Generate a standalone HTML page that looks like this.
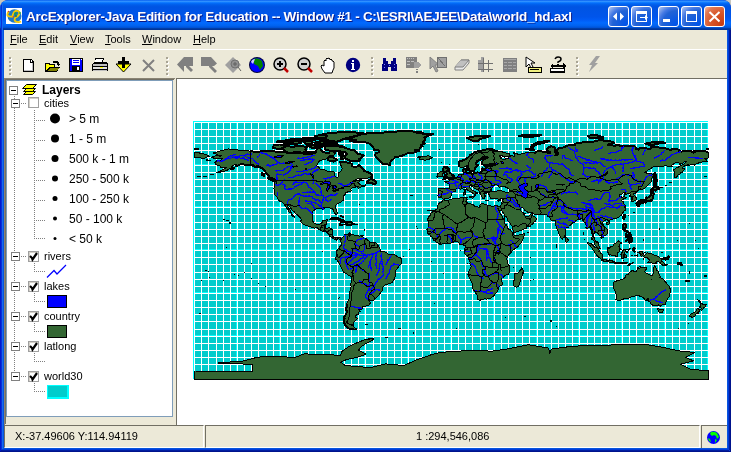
<!DOCTYPE html>
<html><head><meta charset="utf-8">
<style>
*{margin:0;padding:0;box-sizing:border-box}
html,body{width:731px;height:452px;overflow:hidden;background:#c8c6bd;font-family:"Liberation Sans",sans-serif}
.a{position:absolute}
#win{position:absolute;left:0;top:0;width:731px;height:452px;background:#0842d8;border-radius:8px 8px 0 0;overflow:hidden}
#title{position:absolute;left:0;top:0;width:731px;height:30px;
background:linear-gradient(to bottom,#0058ee 0%,#3593ff 4%,#288eff 6%,#127dff 8%,#036ffc 10%,#0262ee 14%,#0057e5 20%,#0054e3 24%,#0055eb 56%,#005bf5 66%,#026afe 76%,#0062ef 86%,#0052d6 92%,#0040ab 94%,#003092 100%);border-radius:8px 8px 0 0}
#ttext{will-change:transform;position:absolute;left:26px;top:9px;font-weight:bold;font-size:13.5px;color:#fff;text-shadow:1px 1px #0a1883;white-space:nowrap;letter-spacing:-0.26px}
.tb{position:absolute;top:6px;width:21px;height:21px;border:1px solid #fff;border-radius:3px;
background:radial-gradient(circle at 90% 90%,#0054e9 0%,#2263d5 55%,#4479e4 70%,#a3bbec 95%,#fff 100%)}
#frame{position:absolute;left:4px;top:30px;width:723px;height:418px;background:#ece9d8}
.m{position:absolute;top:2px;font-size:11px;line-height:14px;will-change:transform}
.g{will-change:transform}
</style></head><body>
<div id="win">
 <div id="title">
  <svg class="a" style="left:6px;top:8px" width="16" height="16" viewBox="6 8 16 16">
   <rect x="6" y="8" width="16" height="16" fill="#fff"/>
   <ellipse cx="14.5" cy="16" rx="7" ry="6.8" fill="#1e78c8"/>
   <path d="M9 11.5Q7 13 7.5 15.5Q9 17 12.5 16.5Q13 12 15.5 11Q19 10.5 19.5 13Q19 16 15.5 17.5Q14 19 15 21Q18 23 21 21.5" stroke="#f5c800" stroke-width="1.8" fill="none"/>
   <circle cx="15.5" cy="13.5" r="1.2" fill="#20a040"/><circle cx="16" cy="16" r="1" fill="#208040"/><circle cx="20" cy="13" r="1" fill="#30b050"/>
   <circle cx="8.5" cy="11.5" r="0.8" fill="#e04020"/><circle cx="13.2" cy="16.8" r="0.7" fill="#e04020"/>
  </svg>
  <div id="ttext">ArcExplorer-Java Edition for Education -- Window #1 - C:\ESRI\AEJEE\Data\world_hd.axl</div>
  <div class="tb" style="left:608px"></div>
  <div class="tb" style="left:631px"></div>
  <div class="tb" style="left:658px"></div>
  <div class="tb" style="left:681px"></div>
  <div class="tb" style="left:704px;background:radial-gradient(circle at 90% 90%,#c83c10 0%,#d8572a 50%,#e27a55 80%,#f4c0a8 100%)"></div>
  <svg class="a" style="left:600px;top:0" width="131" height="30" viewBox="600 0 131 30" shape-rendering="crispEdges">
   <path d="M617 12.5V20.5L613 16.5Z M620 12.5V20.5L624 16.5Z" fill="#fff" shape-rendering="auto"/>
   <path d="M636 11H647V22H636Z M637 14V21H646V14Z" fill="#fff" fill-rule="evenodd"/>
   <rect x="640" y="17" width="6" height="1" fill="#fff"/>
   <path d="M645 15L648 17.5L645 20Z" fill="#fff" shape-rendering="auto"/>
   <rect x="663" y="19" width="7" height="3" fill="#fff"/>
   <path d="M686 11H697V22H686Z M687 14V21H696V14Z" fill="#fff" fill-rule="evenodd"/>
   <path d="M709.5 12L719.5 21.5M719.5 12L709.5 21.5" stroke="#fff" stroke-width="2" shape-rendering="auto"/>
  </svg>
 </div>
 <div id="frame"></div>
 <div class="a" style="left:0;top:30px;width:1px;height:422px;background:#0019cf"></div>
 <div class="a" style="left:1px;top:5px;width:1px;height:447px;background:#0831d9"></div>
 <div class="a" style="left:2px;top:4px;width:1px;height:448px;background:#166aee"></div>
 <div class="a" style="left:3px;top:30px;width:1px;height:422px;background:#0855dd"></div>
 <div class="a" style="left:727px;top:30px;width:1px;height:418px;background:#0855dd"></div>
 <div class="a" style="left:728px;top:30px;width:1px;height:419px;background:#003bda"></div>
 <div class="a" style="left:729px;top:30px;width:1px;height:420px;background:#001ea0"></div>
 <div class="a" style="left:730px;top:30px;width:1px;height:422px;background:#00138c"></div>
 <div class="a" style="left:3px;top:448px;width:724px;height:1px;background:#0855dd"></div>
 <div class="a" style="left:2px;top:449px;width:726px;height:1px;background:#003bda"></div>
 <div class="a" style="left:1px;top:450px;width:728px;height:1px;background:#001ea0"></div>
 <div class="a" style="left:0;top:451px;width:730px;height:1px;background:#00138c"></div>
 <div class="a" style="left:4px;top:49px;width:723px;height:1px;background:#fff"></div>
 <div class="a" style="left:0;top:30px;width:731px;height:19px;color:#000">
  <span class="m" style="left:10px"><u>F</u>ile</span>
  <span class="m" style="left:39px"><u>E</u>dit</span>
  <span class="m" style="left:70px"><u>V</u>iew</span>
  <span class="m" style="left:105px"><u>T</u>ools</span>
  <span class="m" style="left:142px"><u>W</u>indow</span>
  <span class="m" style="left:193px"><u>H</u>elp</span>
 </div>
 <svg class="a" style="left:0;top:0" width="731" height="80" viewBox="0 0 731 80" shape-rendering="crispEdges">
<!-- grippers --><rect x="10" y="58" width="2" height="2" fill="#fff"/><rect x="9" y="57" width="2" height="2" fill="#a8a494"/><rect x="10" y="62" width="2" height="2" fill="#fff"/><rect x="9" y="61" width="2" height="2" fill="#a8a494"/><rect x="10" y="66" width="2" height="2" fill="#fff"/><rect x="9" y="65" width="2" height="2" fill="#a8a494"/><rect x="10" y="70" width="2" height="2" fill="#fff"/><rect x="9" y="69" width="2" height="2" fill="#a8a494"/><rect x="10" y="74" width="2" height="2" fill="#fff"/><rect x="9" y="73" width="2" height="2" fill="#a8a494"/><rect x="167" y="58" width="2" height="2" fill="#fff"/><rect x="166" y="57" width="2" height="2" fill="#a8a494"/><rect x="167" y="62" width="2" height="2" fill="#fff"/><rect x="166" y="61" width="2" height="2" fill="#a8a494"/><rect x="167" y="66" width="2" height="2" fill="#fff"/><rect x="166" y="65" width="2" height="2" fill="#a8a494"/><rect x="167" y="70" width="2" height="2" fill="#fff"/><rect x="166" y="69" width="2" height="2" fill="#a8a494"/><rect x="167" y="74" width="2" height="2" fill="#fff"/><rect x="166" y="73" width="2" height="2" fill="#a8a494"/><rect x="372" y="58" width="2" height="2" fill="#fff"/><rect x="371" y="57" width="2" height="2" fill="#a8a494"/><rect x="372" y="62" width="2" height="2" fill="#fff"/><rect x="371" y="61" width="2" height="2" fill="#a8a494"/><rect x="372" y="66" width="2" height="2" fill="#fff"/><rect x="371" y="65" width="2" height="2" fill="#a8a494"/><rect x="372" y="70" width="2" height="2" fill="#fff"/><rect x="371" y="69" width="2" height="2" fill="#a8a494"/><rect x="372" y="74" width="2" height="2" fill="#fff"/><rect x="371" y="73" width="2" height="2" fill="#a8a494"/><rect x="577" y="58" width="2" height="2" fill="#fff"/><rect x="576" y="57" width="2" height="2" fill="#a8a494"/><rect x="577" y="62" width="2" height="2" fill="#fff"/><rect x="576" y="61" width="2" height="2" fill="#a8a494"/><rect x="577" y="66" width="2" height="2" fill="#fff"/><rect x="576" y="65" width="2" height="2" fill="#a8a494"/><rect x="577" y="70" width="2" height="2" fill="#fff"/><rect x="576" y="69" width="2" height="2" fill="#a8a494"/><rect x="577" y="74" width="2" height="2" fill="#fff"/><rect x="576" y="73" width="2" height="2" fill="#a8a494"/>
<!-- new doc -->
<path d="M23 59H31L34 62V72H23Z" fill="#000"/>
<path d="M24 60H30V63H33V71H24Z" fill="#fff"/>
<path d="M32 63H33V71H24V70H32Z" fill="#c0c0c0"/>
<rect x="31" y="60" width="1" height="2" fill="#fff"/>
<!-- open folder -->
<path d="M45 63H49L50 64H55V67H60L57 72H45Z" fill="#000"/>
<path d="M46 64H48L49 65H54V67H49L46 71Z" fill="#ffff00"/>
<path d="M47 71L50 68H59L56 71Z" fill="#808000"/>
<path d="M53 61H57L59 62V64H60L58 66L56 64H57V63H53Z" fill="#000"/>
<!-- save -->
<rect x="69" y="58" width="14" height="14" fill="#000"/>
<rect x="70" y="59" width="12" height="12" fill="#0000ff"/>
<rect x="72" y="59" width="8" height="6" fill="#fff"/>
<rect x="73" y="60" width="6" height="1" fill="#0000ff"/><rect x="73" y="62" width="6" height="1" fill="#0000ff"/>
<rect x="72" y="66" width="8" height="5" fill="#000"/>
<rect x="77" y="67" width="2" height="3" fill="#fff"/>
<rect x="81" y="59" width="1" height="1" fill="#fff"/>
<!-- printer -->
<path d="M95 58H104L103 62H106L108 64V71H92V64L94 62H95Z" fill="#000"/>
<path d="M96 59H103L102 62H95Z" fill="#fff"/>
<rect x="93" y="64" width="14" height="2" fill="#c0c0c0"/>
<rect x="93" y="67" width="14" height="2" fill="#e0e0e0"/>
<rect x="100" y="67" width="3" height="1" fill="#ffff00"/>
<rect x="93" y="70" width="14" height="1" fill="#c0c0c0"/>
<!-- add -->
<path d="M116 64H131L123.5 72Z" fill="#ffff00" stroke="#000" stroke-width="1" shape-rendering="auto"/>
<rect x="122" y="57" width="3" height="11" fill="#000"/>
<rect x="118" y="61" width="11" height="3" fill="#000"/>
<!-- X gray -->
<path d="M143 60L154 71M154 60L143 71" stroke="#808080" stroke-width="2" shape-rendering="auto"/>
<!-- back arrow -->
<path d="M177 64.5L184 57H193V66H189L193 70L191 72L186 67V66H184V72Z" fill="#808080" shape-rendering="auto"/>
<path d="M201 66L201 57H211L217 63.5L214 66H212L217 71L215 73L209 67V66Z" fill="#808080" shape-rendering="auto"/>
<path d="M225 65L233 57L241 65L233 73Z" fill="#a0a0a0" shape-rendering="auto"/>
<circle cx="235" cy="64" r="4" fill="#909090" stroke="#707070" shape-rendering="auto"/>
<path d="M233 64H237M235 62V66M238 67L241 71" stroke="#606060" stroke-width="1" shape-rendering="auto"/>
<!-- globe -->
<circle cx="257" cy="65" r="8" fill="#000040" shape-rendering="auto"/>
<circle cx="257" cy="65" r="7" fill="#0000ff" shape-rendering="auto"/>
<path d="M254 59Q258 57 262 61L263 66L260 70L258 66L254 64Z" fill="#008000" shape-rendering="auto"/>
<path d="M251 62Q252 59 255 59L253 64Z" fill="#ffffff" opacity="0.8" shape-rendering="auto"/>
<!-- zoom in -->
<circle cx="280" cy="64" r="6" fill="#d0d0d0" stroke="#000" stroke-width="1.5" shape-rendering="auto"/>
<path d="M277 64H283M280 61V67" stroke="#000" stroke-width="2" shape-rendering="auto"/>
<path d="M284 68L288 72" stroke="#c00000" stroke-width="2.5" shape-rendering="auto"/>
<circle cx="304" cy="64" r="6" fill="#d0d0d0" stroke="#000" stroke-width="1.5" shape-rendering="auto"/>
<path d="M301 64H307" stroke="#000" stroke-width="2" shape-rendering="auto"/>
<path d="M308 68L312 72" stroke="#c00000" stroke-width="2.5" shape-rendering="auto"/>
<!-- hand -->
<path d="M325 73L322 69L321 66L322 65L324 66V61L325 60L326 61V59L327 58L328 59V58.5L329 58L330 59V60L331 59L332 60V61L333 61L334 62V68L333 70L332 73Z" fill="#fff" stroke="#000" stroke-width="1" shape-rendering="auto"/>
<!-- info -->
<circle cx="353" cy="65" r="7.2" fill="#000080" shape-rendering="auto"/>
<rect x="352" y="60" width="2" height="2" fill="#fff"/>
<path d="M351 63H354V69H355V70H351V69H352V64H351Z" fill="#fff"/>
<!-- binoculars -->
<path d="M383 58H386V61H388V64H391V61H393V58H396V63L397 65V71H391V67H388V71H382V65L383 63Z" fill="#000080"/>
<g fill="#8080ff"><rect x="384" y="64" width="1" height="1"/><rect x="384" y="67" width="1" height="1"/><rect x="394" y="64" width="1" height="1"/><rect x="394" y="67" width="1" height="1"/><rect x="389" y="65" width="1" height="1"/></g>
<!-- table with arrow gray -->
<rect x="406" y="57" width="11" height="11" fill="#808080"/>
<g fill="#c0c0c0"><rect x="407" y="58" width="1" height="1"/><rect x="409" y="58" width="1" height="1"/><rect x="411" y="58" width="1" height="1"/><rect x="413" y="58" width="1" height="1"/><rect x="407" y="61" width="3" height="1"/><rect x="411" y="61" width="3" height="1"/><rect x="407" y="64" width="3" height="1"/></g>
<path d="M414 62H418L421 65L418 68H414Z" fill="#a0a0a0"/>
<rect x="416" y="69" width="2" height="1" fill="#808080"/><rect x="416" y="71" width="2" height="2" fill="#808080"/>
<!-- select pointer gray -->
<path d="M430 57L430 69L433 66L436 72L438 71L435 65H439Z" fill="#a0a0a0" stroke="#808080" shape-rendering="auto"/>
<rect x="437" y="57" width="9" height="10" fill="#a0a0a0" stroke="#707070"/>
<path d="M438 58L445 66" stroke="#707070"/>
<!-- eraser -->
<path d="M455 67L461 60H469V63L463 70H455Z" fill="#e8e8e8" stroke="#808080" shape-rendering="auto"/>
<path d="M461 60L469 60L463 67H455" fill="#c0c0c0" stroke="#808080" shape-rendering="auto"/>
<!-- graph gray -->
<path d="M481 57H484V72H481Z" fill="#a0a0a0"/>
<path d="M478 60H481V70H478Z" fill="#a0a0a0"/>
<path d="M478 63H493M478 69H493M483 58V72M488 60V72" stroke="#707070"/>
<!-- table gray -->
<rect x="503" y="58" width="14" height="14" fill="#808080"/>
<g fill="#a8a8a8"><rect x="504" y="62" width="3" height="1"/><rect x="508" y="62" width="4" height="1"/><rect x="513" y="62" width="3" height="1"/><rect x="504" y="65" width="3" height="1"/><rect x="508" y="65" width="4" height="1"/><rect x="513" y="65" width="3" height="1"/><rect x="504" y="68" width="3" height="1"/><rect x="508" y="68" width="4" height="1"/><rect x="513" y="68" width="3" height="1"/><rect x="504" y="59" width="12" height="1"/></g>
<!-- pointer + yellow ruler -->
<path d="M526 57V67L529 64L531 68L533 67L531 63H535Z" fill="#fff" stroke="#000" shape-rendering="auto"/>
<rect x="528" y="67" width="14" height="6" fill="#000"/>
<rect x="529" y="68" width="12" height="4" fill="#f0f080"/>
<path d="M530 69L531 70L532 69L533 70L534 69L535 70L536 69L537 70L538 69L539 70" stroke="#000" fill="none"/>
<!-- measure ? -->
<path d="M555 59Q556 57 558 57Q561 57 561 59Q561 61 558 62V63" stroke="#000" stroke-width="1.5" fill="none" shape-rendering="auto"/>
<rect x="557" y="64" width="2" height="2" fill="#000"/>
<path d="M550 66L553 63V65H563V63L566 66L563 69V67H553V69Z" fill="#000"/>
<rect x="550" y="68" width="15" height="5" fill="#000"/>
<rect x="551" y="69" width="13" height="2" fill="#fff"/>
<!-- lightning -->
<path d="M596 56H600L595 63H598L589 72L592 65H589Z" fill="#a0a0a0" shape-rendering="auto"/>
</svg>

 <div class="a" style="left:4px;top:78px;width:171px;height:347px;border-top:1px solid #8a8474;border-left:1px solid #8a8474;"></div>
 <div class="a" style="left:5px;top:79px;width:169px;height:345px;border-top:1px solid #716f64;border-left:1px solid #716f64;"></div>
 <div class="a" style="left:6px;top:80px;width:167px;height:337px;background:#fff;border:1px solid #7f9db9"></div>
 <svg class="a" style="left:0;top:0;will-change:transform" width="180" height="420" viewBox="0 0 180 420" shape-rendering="crispEdges"><g fill="#808080"><rect x="14" y="96" width="1" height="1"/><rect x="14" y="98" width="1" height="1"/><rect x="14" y="108" width="1" height="1"/><rect x="14" y="110" width="1" height="1"/><rect x="14" y="112" width="1" height="1"/><rect x="14" y="114" width="1" height="1"/><rect x="14" y="116" width="1" height="1"/><rect x="14" y="118" width="1" height="1"/><rect x="14" y="120" width="1" height="1"/><rect x="14" y="122" width="1" height="1"/><rect x="14" y="124" width="1" height="1"/><rect x="14" y="126" width="1" height="1"/><rect x="14" y="128" width="1" height="1"/><rect x="14" y="130" width="1" height="1"/><rect x="14" y="132" width="1" height="1"/><rect x="14" y="134" width="1" height="1"/><rect x="14" y="136" width="1" height="1"/><rect x="14" y="138" width="1" height="1"/><rect x="14" y="140" width="1" height="1"/><rect x="14" y="142" width="1" height="1"/><rect x="14" y="144" width="1" height="1"/><rect x="14" y="146" width="1" height="1"/><rect x="14" y="148" width="1" height="1"/><rect x="14" y="150" width="1" height="1"/><rect x="14" y="152" width="1" height="1"/><rect x="14" y="154" width="1" height="1"/><rect x="14" y="156" width="1" height="1"/><rect x="14" y="158" width="1" height="1"/><rect x="14" y="160" width="1" height="1"/><rect x="14" y="162" width="1" height="1"/><rect x="14" y="164" width="1" height="1"/><rect x="14" y="166" width="1" height="1"/><rect x="14" y="168" width="1" height="1"/><rect x="14" y="170" width="1" height="1"/><rect x="14" y="172" width="1" height="1"/><rect x="14" y="174" width="1" height="1"/><rect x="14" y="176" width="1" height="1"/><rect x="14" y="178" width="1" height="1"/><rect x="14" y="180" width="1" height="1"/><rect x="14" y="182" width="1" height="1"/><rect x="14" y="184" width="1" height="1"/><rect x="14" y="186" width="1" height="1"/><rect x="14" y="188" width="1" height="1"/><rect x="14" y="190" width="1" height="1"/><rect x="14" y="192" width="1" height="1"/><rect x="14" y="194" width="1" height="1"/><rect x="14" y="196" width="1" height="1"/><rect x="14" y="198" width="1" height="1"/><rect x="14" y="200" width="1" height="1"/><rect x="14" y="202" width="1" height="1"/><rect x="14" y="204" width="1" height="1"/><rect x="14" y="206" width="1" height="1"/><rect x="14" y="208" width="1" height="1"/><rect x="14" y="210" width="1" height="1"/><rect x="14" y="212" width="1" height="1"/><rect x="14" y="214" width="1" height="1"/><rect x="14" y="216" width="1" height="1"/><rect x="14" y="218" width="1" height="1"/><rect x="14" y="220" width="1" height="1"/><rect x="14" y="222" width="1" height="1"/><rect x="14" y="224" width="1" height="1"/><rect x="14" y="226" width="1" height="1"/><rect x="14" y="228" width="1" height="1"/><rect x="14" y="230" width="1" height="1"/><rect x="14" y="232" width="1" height="1"/><rect x="14" y="234" width="1" height="1"/><rect x="14" y="236" width="1" height="1"/><rect x="14" y="238" width="1" height="1"/><rect x="14" y="240" width="1" height="1"/><rect x="14" y="242" width="1" height="1"/><rect x="14" y="244" width="1" height="1"/><rect x="14" y="246" width="1" height="1"/><rect x="14" y="248" width="1" height="1"/><rect x="14" y="250" width="1" height="1"/><rect x="14" y="262" width="1" height="1"/><rect x="14" y="264" width="1" height="1"/><rect x="14" y="266" width="1" height="1"/><rect x="14" y="268" width="1" height="1"/><rect x="14" y="270" width="1" height="1"/><rect x="14" y="272" width="1" height="1"/><rect x="14" y="274" width="1" height="1"/><rect x="14" y="276" width="1" height="1"/><rect x="14" y="278" width="1" height="1"/><rect x="14" y="280" width="1" height="1"/><rect x="14" y="292" width="1" height="1"/><rect x="14" y="294" width="1" height="1"/><rect x="14" y="296" width="1" height="1"/><rect x="14" y="298" width="1" height="1"/><rect x="14" y="300" width="1" height="1"/><rect x="14" y="302" width="1" height="1"/><rect x="14" y="304" width="1" height="1"/><rect x="14" y="306" width="1" height="1"/><rect x="14" y="308" width="1" height="1"/><rect x="14" y="310" width="1" height="1"/><rect x="14" y="322" width="1" height="1"/><rect x="14" y="324" width="1" height="1"/><rect x="14" y="326" width="1" height="1"/><rect x="14" y="328" width="1" height="1"/><rect x="14" y="330" width="1" height="1"/><rect x="14" y="332" width="1" height="1"/><rect x="14" y="334" width="1" height="1"/><rect x="14" y="336" width="1" height="1"/><rect x="14" y="338" width="1" height="1"/><rect x="14" y="340" width="1" height="1"/><rect x="14" y="352" width="1" height="1"/><rect x="14" y="354" width="1" height="1"/><rect x="14" y="356" width="1" height="1"/><rect x="14" y="358" width="1" height="1"/><rect x="14" y="360" width="1" height="1"/><rect x="14" y="362" width="1" height="1"/><rect x="14" y="364" width="1" height="1"/><rect x="14" y="366" width="1" height="1"/><rect x="14" y="368" width="1" height="1"/><rect x="14" y="370" width="1" height="1"/><rect x="34" y="110" width="1" height="1"/><rect x="34" y="112" width="1" height="1"/><rect x="34" y="114" width="1" height="1"/><rect x="34" y="116" width="1" height="1"/><rect x="34" y="118" width="1" height="1"/><rect x="34" y="120" width="1" height="1"/><rect x="34" y="122" width="1" height="1"/><rect x="34" y="124" width="1" height="1"/><rect x="34" y="126" width="1" height="1"/><rect x="34" y="128" width="1" height="1"/><rect x="34" y="130" width="1" height="1"/><rect x="34" y="132" width="1" height="1"/><rect x="34" y="134" width="1" height="1"/><rect x="34" y="136" width="1" height="1"/><rect x="34" y="138" width="1" height="1"/><rect x="34" y="140" width="1" height="1"/><rect x="34" y="142" width="1" height="1"/><rect x="34" y="144" width="1" height="1"/><rect x="34" y="146" width="1" height="1"/><rect x="34" y="148" width="1" height="1"/><rect x="34" y="150" width="1" height="1"/><rect x="34" y="152" width="1" height="1"/><rect x="34" y="154" width="1" height="1"/><rect x="34" y="156" width="1" height="1"/><rect x="34" y="158" width="1" height="1"/><rect x="34" y="160" width="1" height="1"/><rect x="34" y="162" width="1" height="1"/><rect x="34" y="164" width="1" height="1"/><rect x="34" y="166" width="1" height="1"/><rect x="34" y="168" width="1" height="1"/><rect x="34" y="170" width="1" height="1"/><rect x="34" y="172" width="1" height="1"/><rect x="34" y="174" width="1" height="1"/><rect x="34" y="176" width="1" height="1"/><rect x="34" y="178" width="1" height="1"/><rect x="34" y="180" width="1" height="1"/><rect x="34" y="182" width="1" height="1"/><rect x="34" y="184" width="1" height="1"/><rect x="34" y="186" width="1" height="1"/><rect x="34" y="188" width="1" height="1"/><rect x="34" y="190" width="1" height="1"/><rect x="34" y="192" width="1" height="1"/><rect x="34" y="194" width="1" height="1"/><rect x="34" y="196" width="1" height="1"/><rect x="34" y="198" width="1" height="1"/><rect x="34" y="200" width="1" height="1"/><rect x="34" y="202" width="1" height="1"/><rect x="34" y="204" width="1" height="1"/><rect x="34" y="206" width="1" height="1"/><rect x="34" y="208" width="1" height="1"/><rect x="34" y="210" width="1" height="1"/><rect x="34" y="212" width="1" height="1"/><rect x="34" y="214" width="1" height="1"/><rect x="34" y="216" width="1" height="1"/><rect x="34" y="218" width="1" height="1"/><rect x="34" y="220" width="1" height="1"/><rect x="34" y="222" width="1" height="1"/><rect x="34" y="224" width="1" height="1"/><rect x="34" y="226" width="1" height="1"/><rect x="34" y="228" width="1" height="1"/><rect x="34" y="230" width="1" height="1"/><rect x="34" y="232" width="1" height="1"/><rect x="34" y="234" width="1" height="1"/><rect x="34" y="236" width="1" height="1"/><rect x="34" y="238" width="1" height="1"/><rect x="36" y="120" width="1" height="1"/><rect x="38" y="120" width="1" height="1"/><rect x="40" y="120" width="1" height="1"/><rect x="42" y="120" width="1" height="1"/><rect x="44" y="120" width="1" height="1"/><rect x="36" y="140" width="1" height="1"/><rect x="38" y="140" width="1" height="1"/><rect x="40" y="140" width="1" height="1"/><rect x="42" y="140" width="1" height="1"/><rect x="44" y="140" width="1" height="1"/><rect x="36" y="160" width="1" height="1"/><rect x="38" y="160" width="1" height="1"/><rect x="40" y="160" width="1" height="1"/><rect x="42" y="160" width="1" height="1"/><rect x="44" y="160" width="1" height="1"/><rect x="36" y="180" width="1" height="1"/><rect x="38" y="180" width="1" height="1"/><rect x="40" y="180" width="1" height="1"/><rect x="42" y="180" width="1" height="1"/><rect x="44" y="180" width="1" height="1"/><rect x="36" y="200" width="1" height="1"/><rect x="38" y="200" width="1" height="1"/><rect x="40" y="200" width="1" height="1"/><rect x="42" y="200" width="1" height="1"/><rect x="44" y="200" width="1" height="1"/><rect x="36" y="220" width="1" height="1"/><rect x="38" y="220" width="1" height="1"/><rect x="40" y="220" width="1" height="1"/><rect x="42" y="220" width="1" height="1"/><rect x="44" y="220" width="1" height="1"/><rect x="36" y="238" width="1" height="1"/><rect x="38" y="238" width="1" height="1"/><rect x="40" y="238" width="1" height="1"/><rect x="42" y="238" width="1" height="1"/><rect x="44" y="238" width="1" height="1"/><rect x="21" y="256" width="1" height="1"/><rect x="23" y="256" width="1" height="1"/><rect x="25" y="256" width="1" height="1"/><rect x="34" y="263" width="1" height="1"/><rect x="34" y="265" width="1" height="1"/><rect x="34" y="267" width="1" height="1"/><rect x="34" y="269" width="1" height="1"/><rect x="34" y="271" width="1" height="1"/><rect x="36" y="271" width="1" height="1"/><rect x="38" y="271" width="1" height="1"/><rect x="40" y="271" width="1" height="1"/><rect x="42" y="271" width="1" height="1"/><rect x="44" y="271" width="1" height="1"/><rect x="21" y="286" width="1" height="1"/><rect x="23" y="286" width="1" height="1"/><rect x="25" y="286" width="1" height="1"/><rect x="34" y="293" width="1" height="1"/><rect x="34" y="295" width="1" height="1"/><rect x="34" y="297" width="1" height="1"/><rect x="34" y="299" width="1" height="1"/><rect x="34" y="301" width="1" height="1"/><rect x="36" y="301" width="1" height="1"/><rect x="38" y="301" width="1" height="1"/><rect x="40" y="301" width="1" height="1"/><rect x="42" y="301" width="1" height="1"/><rect x="44" y="301" width="1" height="1"/><rect x="21" y="316" width="1" height="1"/><rect x="23" y="316" width="1" height="1"/><rect x="25" y="316" width="1" height="1"/><rect x="34" y="323" width="1" height="1"/><rect x="34" y="325" width="1" height="1"/><rect x="34" y="327" width="1" height="1"/><rect x="34" y="329" width="1" height="1"/><rect x="34" y="331" width="1" height="1"/><rect x="36" y="331" width="1" height="1"/><rect x="38" y="331" width="1" height="1"/><rect x="40" y="331" width="1" height="1"/><rect x="42" y="331" width="1" height="1"/><rect x="44" y="331" width="1" height="1"/><rect x="21" y="346" width="1" height="1"/><rect x="23" y="346" width="1" height="1"/><rect x="25" y="346" width="1" height="1"/><rect x="34" y="353" width="1" height="1"/><rect x="34" y="355" width="1" height="1"/><rect x="34" y="357" width="1" height="1"/><rect x="34" y="359" width="1" height="1"/><rect x="34" y="361" width="1" height="1"/><rect x="36" y="361" width="1" height="1"/><rect x="38" y="361" width="1" height="1"/><rect x="40" y="361" width="1" height="1"/><rect x="42" y="361" width="1" height="1"/><rect x="44" y="361" width="1" height="1"/><rect x="21" y="376" width="1" height="1"/><rect x="23" y="376" width="1" height="1"/><rect x="25" y="376" width="1" height="1"/><rect x="34" y="383" width="1" height="1"/><rect x="34" y="385" width="1" height="1"/><rect x="34" y="387" width="1" height="1"/><rect x="34" y="389" width="1" height="1"/><rect x="34" y="391" width="1" height="1"/><rect x="36" y="391" width="1" height="1"/><rect x="38" y="391" width="1" height="1"/><rect x="40" y="391" width="1" height="1"/><rect x="42" y="391" width="1" height="1"/><rect x="44" y="391" width="1" height="1"/><rect x="21" y="103" width="1" height="1"/><rect x="23" y="103" width="1" height="1"/><rect x="25" y="103" width="1" height="1"/></g><rect x="9.5" y="86.5" width="8" height="8" fill="#fff" stroke="#808080"/><rect x="11" y="90" width="5" height="1" fill="#000"/><g shape-rendering="auto" stroke="#000" stroke-width="1" fill="#ffff00"><path d="M26.5 91.5H35.5L32.5 94.5H23.5Z"/><path d="M26.5 88.5H35.5L32.5 91.5H23.5Z"/><path d="M26.5 84.5H36.5L32.5 88.5H22.5Z"/></g><text x="42" y="94" font-family="Liberation Sans" font-size="12" font-weight="bold" fill="#000">Layers</text><rect x="11.5" y="99.5" width="8" height="8" fill="#fff" stroke="#808080"/><rect x="13" y="103" width="5" height="1" fill="#000"/><rect x="28.5" y="97.5" width="10" height="10" fill="#fff" stroke="#a0a0a0"/><rect x="29" y="98" width="9" height="1" fill="#d4d0c8"/><rect x="29" y="98" width="1" height="9" fill="#d4d0c8"/><text x="44" y="107" font-family="Liberation Sans" font-size="11" font-weight="normal" fill="#000">cities</text><circle cx="55" cy="118.5" r="5.0" fill="#000" shape-rendering="auto"/><text x="69" y="122.5" font-family="Liberation Sans" font-size="12" font-weight="normal" fill="#000">&gt; 5 m</text><circle cx="55" cy="138.5" r="4.0" fill="#000" shape-rendering="auto"/><text x="69" y="142.5" font-family="Liberation Sans" font-size="12" font-weight="normal" fill="#000">1 - 5 m</text><circle cx="55" cy="158.5" r="3.5" fill="#000" shape-rendering="auto"/><text x="69" y="162.5" font-family="Liberation Sans" font-size="12" font-weight="normal" fill="#000">500 k - 1 m</text><circle cx="55" cy="178.5" r="3.0" fill="#000" shape-rendering="auto"/><text x="69" y="182.5" font-family="Liberation Sans" font-size="12" font-weight="normal" fill="#000">250 - 500 k</text><circle cx="55" cy="198.5" r="2.5" fill="#000" shape-rendering="auto"/><text x="69" y="202.5" font-family="Liberation Sans" font-size="12" font-weight="normal" fill="#000">100 - 250 k</text><circle cx="55" cy="218.5" r="2.0" fill="#000" shape-rendering="auto"/><text x="69" y="222.5" font-family="Liberation Sans" font-size="12" font-weight="normal" fill="#000">50 - 100 k</text><circle cx="55" cy="238.5" r="1.5" fill="#000" shape-rendering="auto"/><text x="69" y="242.5" font-family="Liberation Sans" font-size="12" font-weight="normal" fill="#000">&lt; 50 k</text><rect x="11.5" y="252.5" width="8" height="8" fill="#fff" stroke="#808080"/><rect x="13" y="256" width="5" height="1" fill="#000"/><rect x="28.5" y="251.5" width="10" height="10" fill="#fff" stroke="#a0a0a0"/><rect x="29" y="252" width="9" height="1" fill="#d4d0c8"/><rect x="29" y="252" width="1" height="9" fill="#d4d0c8"/><path d="M30 256L32 258L32.5 259.5L37 253" stroke="#000" stroke-width="2.2" fill="none" shape-rendering="auto"/><text x="44" y="260" font-family="Liberation Sans" font-size="11" font-weight="normal" fill="#000">rivers</text><rect x="11.5" y="282.5" width="8" height="8" fill="#fff" stroke="#808080"/><rect x="13" y="286" width="5" height="1" fill="#000"/><rect x="28.5" y="281.5" width="10" height="10" fill="#fff" stroke="#a0a0a0"/><rect x="29" y="282" width="9" height="1" fill="#d4d0c8"/><rect x="29" y="282" width="1" height="9" fill="#d4d0c8"/><path d="M30 286L32 288L32.5 289.5L37 283" stroke="#000" stroke-width="2.2" fill="none" shape-rendering="auto"/><text x="44" y="290" font-family="Liberation Sans" font-size="11" font-weight="normal" fill="#000">lakes</text><rect x="11.5" y="312.5" width="8" height="8" fill="#fff" stroke="#808080"/><rect x="13" y="316" width="5" height="1" fill="#000"/><rect x="28.5" y="311.5" width="10" height="10" fill="#fff" stroke="#a0a0a0"/><rect x="29" y="312" width="9" height="1" fill="#d4d0c8"/><rect x="29" y="312" width="1" height="9" fill="#d4d0c8"/><path d="M30 316L32 318L32.5 319.5L37 313" stroke="#000" stroke-width="2.2" fill="none" shape-rendering="auto"/><text x="44" y="320" font-family="Liberation Sans" font-size="11" font-weight="normal" fill="#000">country</text><rect x="11.5" y="342.5" width="8" height="8" fill="#fff" stroke="#808080"/><rect x="13" y="346" width="5" height="1" fill="#000"/><rect x="28.5" y="341.5" width="10" height="10" fill="#fff" stroke="#a0a0a0"/><rect x="29" y="342" width="9" height="1" fill="#d4d0c8"/><rect x="29" y="342" width="1" height="9" fill="#d4d0c8"/><path d="M30 346L32 348L32.5 349.5L37 343" stroke="#000" stroke-width="2.2" fill="none" shape-rendering="auto"/><text x="44" y="350" font-family="Liberation Sans" font-size="11" font-weight="normal" fill="#000">latlong</text><rect x="11.5" y="372.5" width="8" height="8" fill="#fff" stroke="#808080"/><rect x="13" y="376" width="5" height="1" fill="#000"/><rect x="28.5" y="371.5" width="10" height="10" fill="#fff" stroke="#a0a0a0"/><rect x="29" y="372" width="9" height="1" fill="#d4d0c8"/><rect x="29" y="372" width="1" height="9" fill="#d4d0c8"/><path d="M30 376L32 378L32.5 379.5L37 373" stroke="#000" stroke-width="2.2" fill="none" shape-rendering="auto"/><text x="44" y="380" font-family="Liberation Sans" font-size="11" font-weight="normal" fill="#000">world30</text><path d="M47 277.5L54 270.5L57 274L66 265" stroke="#0000ff" stroke-width="1.2" fill="none" shape-rendering="auto"/><rect x="47.5" y="295.5" width="19" height="12" fill="#0000ff" stroke="#000"/><rect x="47.5" y="325.5" width="19" height="12" fill="#336633" stroke="#000"/><rect x="47" y="385" width="22" height="14" fill="#00ffff"/><rect x="48" y="386" width="19" height="11" fill="#00cccc"/></svg>
 <div class="a" style="left:176px;top:78px;width:551px;height:347px;background:#fff;border-top:1px solid #716f64;border-left:1px solid #716f64"></div>
 <div class="a" style="left:4px;top:425px;width:200px;height:23px;border:1px solid;border-color:#716f64 #fff #fff #716f64;font-size:11px"><span class="a g" style="left:10px;top:4px">X:-37.49606 Y:114.94119</span></div>
 <div class="a" style="left:205px;top:425px;width:495px;height:23px;border:1px solid;border-color:#716f64 #fff #fff #716f64;font-size:11px"><span class="a g" style="left:210px;top:4px">1 :294,546,086</span></div>
 <div class="a" style="left:701px;top:425px;width:26px;height:23px;border-top:1px solid #716f64;border-left:1px solid #716f64"></div>
 <svg class="a" style="left:706px;top:430px" width="15" height="15" viewBox="0 0 15 15"><circle cx="7.5" cy="7.5" r="6.5" fill="#0000ff"/><path d="M5 2Q8 1 11 3L13 7L11 9L10 6L8 5L6 6L4 4Z M2 8L4 9L5 12L3 11Z M9 9L11 10L9 13Z" fill="#00ff00"/></svg>
 <svg class="a" style="left:0;top:0" width="731" height="452" viewBox="0 0 731 452" shape-rendering="crispEdges">
<rect x="193" y="121" width="515" height="258" fill="#00cccc"/>
<path d="M193.5 121V379M236.5 121V379M279.5 121V379M322.5 121V379M364.5 121V379M407.5 121V379M450.5 121V379M493.5 121V379M536.5 121V379M578.5 121V379M621.5 121V379M664.5 121V379M707.5 121V379M193 121.5H708M193 164.5H708M193 206.5H708M193 249.5H708M193 292.5H708M193 335.5H708M193 378.5H708" stroke="#00ffff" stroke-width="1" fill="none"/>
<path d="M194.5 122V379M201.5 122V379M208.5 122V379M216.5 122V379M223.5 122V379M230.5 122V379M237.5 122V379M244.5 122V379M251.5 122V379M258.5 122V379M266.5 122V379M273.5 122V379M280.5 122V379M287.5 122V379M294.5 122V379M301.5 122V379M308.5 122V379M315.5 122V379M323.5 122V379M330.5 122V379M337.5 122V379M344.5 122V379M351.5 122V379M358.5 122V379M365.5 122V379M373.5 122V379M380.5 122V379M387.5 122V379M394.5 122V379M401.5 122V379M408.5 122V379M415.5 122V379M422.5 122V379M430.5 122V379M437.5 122V379M444.5 122V379M451.5 122V379M458.5 122V379M465.5 122V379M472.5 122V379M480.5 122V379M487.5 122V379M494.5 122V379M501.5 122V379M508.5 122V379M515.5 122V379M522.5 122V379M529.5 122V379M537.5 122V379M544.5 122V379M551.5 122V379M558.5 122V379M565.5 122V379M572.5 122V379M579.5 122V379M587.5 122V379M594.5 122V379M601.5 122V379M608.5 122V379M615.5 122V379M622.5 122V379M629.5 122V379M636.5 122V379M644.5 122V379M651.5 122V379M658.5 122V379M665.5 122V379M672.5 122V379M679.5 122V379M686.5 122V379M694.5 122V379M701.5 122V379M194 122.5H708M194 129.5H708M194 136.5H708M194 143.5H708M194 150.5H708M194 157.5H708M194 165.5H708M194 172.5H708M194 179.5H708M194 186.5H708M194 193.5H708M194 200.5H708M194 207.5H708M194 214.5H708M194 222.5H708M194 229.5H708M194 236.5H708M194 243.5H708M194 250.5H708M194 257.5H708M194 264.5H708M194 272.5H708M194 279.5H708M194 286.5H708M194 293.5H708M194 300.5H708M194 307.5H708M194 314.5H708M194 321.5H708M194 329.5H708M194 336.5H708M194 343.5H708M194 350.5H708M194 357.5H708M194 364.5H708M194 371.5H708" stroke="#ffffff" stroke-width="1" fill="none"/>
<path d="M359.9 179.4L363.5 180.3L362.3 180.6L359.5 179.7ZM327.4 135.6L322.4 134.8L315.5 135.9L315.0 137.8L318.8 138.5L325.5 137.5L327.4 135.6ZM363.8 155.6L361.3 157.4L359.3 159.0L359.8 160.6L357.6 161.3L354.2 161.3L349.6 160.6L345.4 158.4L340.8 158.9L341.1 157.0L346.2 155.3L347.5 154.0L345.1 152.3L339.5 151.3L335.7 150.7L329.8 150.6L325.1 149.5L324.1 145.6L329.5 146.2L335.9 145.5L342.4 146.7L347.1 148.5L350.2 149.5L353.8 150.2L355.8 151.6L357.6 153.7L362.3 154.9L363.8 155.6ZM272.9 148.0L273.6 146.0L274.3 144.6L279.6 144.5L285.3 145.3L286.9 146.0L281.7 148.5L278.4 148.9L272.9 148.0ZM312.7 142.2L311.0 141.0L307.1 140.8L304.4 142.2L305.7 143.6L311.7 143.6L312.7 142.2ZM288.9 139.6L294.6 139.0L301.7 139.3L303.8 140.5L297.4 140.9L290.3 140.5ZM335.9 145.3L342.4 145.7L340.2 146.7ZM194.7 152.2L199.0 152.9L203.3 153.9L206.8 155.0L209.3 156.3L206.8 157.0L204.7 158.2L202.5 158.9L200.4 157.9L197.6 157.2L194.7 157.9ZM333.1 161.0L335.9 161.4L333.8 162.2ZM314.5 142.9L318.8 142.3L319.5 143.3L315.3 144.0ZM320.2 143.2L316.3 142.0L321.0 141.2L330.2 141.0L337.1 141.7L336.9 143.9L328.8 144.3L321.0 144.2L320.2 143.2ZM363.0 133.2L354.5 132.3L343.1 132.0L328.8 133.2L320.8 134.9L315.3 136.0L314.5 138.2L319.2 139.5L325.1 139.2L328.1 139.9L324.5 141.5L335.9 141.7L339.6 141.2L343.5 138.9L347.2 138.2L350.2 137.0L357.3 135.9L363.0 133.2ZM419.1 156.0L420.5 157.3L417.3 157.2L420.1 158.0L419.3 159.4L423.0 159.9L425.0 160.2L428.1 159.4L430.7 158.7L432.1 157.7L430.5 156.4L428.4 155.7L426.1 156.4L423.0 156.3L419.1 156.0ZM308.8 151.5L314.5 151.5L315.3 153.2L311.0 153.2ZM300.3 139.9L303.1 140.0L301.7 140.6ZM284.6 141.7L292.4 141.6L297.4 141.3L300.6 142.3L301.0 143.3L294.6 143.7L289.1 144.2L283.7 144.2L286.7 142.7L284.6 141.7ZM211.7 157.0L214.0 156.2L217.5 155.6L220.4 156.3L221.1 155.7L218.0 154.9L215.4 153.6L213.5 153.0L216.8 152.3L219.0 151.2L221.8 150.3L226.1 149.6L228.1 148.9L231.8 149.5L234.6 149.6L240.4 150.3L246.1 150.6L250.3 151.3L254.6 151.7L258.2 152.2L260.3 151.3L264.6 151.0L267.5 150.7L270.3 150.5L273.2 151.3L276.0 151.6L280.3 151.6L284.6 152.3L288.9 153.2L294.6 153.5L297.4 152.7L300.3 152.3L303.1 153.6L307.4 154.0L311.7 153.7L314.5 153.2L316.0 151.6L317.1 148.0L320.2 148.5L322.4 151.5L325.2 152.5L328.8 153.0L330.2 151.0L334.5 151.7L335.5 153.3L333.1 156.0L329.1 155.7L327.4 157.6L326.0 159.0L323.1 159.4L319.5 161.0L317.4 163.6L316.5 166.2L318.7 166.9L319.8 169.1L323.1 169.1L326.7 170.9L330.2 171.7L334.1 172.0L334.2 175.1L336.5 177.3L338.5 177.0L338.9 172.6L341.2 171.0L342.2 168.6L341.1 165.7L340.1 162.9L340.2 161.6L344.5 161.7L348.1 163.0L349.9 163.4L352.2 163.7L352.3 166.4L354.5 167.0L355.2 167.4L356.9 166.7L359.3 164.6L360.6 166.3L363.3 168.9L364.0 170.7L366.6 171.9L369.6 172.9L371.6 174.1L372.0 176.1L369.8 177.4L365.9 179.0L360.6 178.9L356.8 179.0L353.8 180.6L350.9 182.7L349.9 183.7L352.3 182.3L354.5 181.3L356.9 180.6L359.6 180.8L358.9 182.1L357.9 182.6L359.1 183.6L359.3 184.7L361.6 185.1L363.8 185.4L365.5 184.6L366.2 185.1L364.5 186.1L360.9 187.1L358.5 188.4L357.2 187.6L359.2 186.0L357.2 186.1L355.6 187.0L353.2 187.4L351.3 188.4L350.6 189.8L351.6 190.8L350.8 191.4L348.1 191.8L345.9 192.7L345.8 194.1L344.5 195.1L343.8 195.7L343.1 197.8L343.6 200.0L342.6 200.8L340.4 202.3L338.5 203.3L336.2 204.7L335.5 206.4L335.7 208.5L336.5 210.1L337.2 212.7L336.8 214.7L335.8 214.7L334.8 213.2L333.7 211.5L333.4 210.0L332.1 208.0L330.4 208.1L328.2 207.2L325.8 207.2L323.8 207.5L324.2 209.1L322.0 209.1L319.8 208.4L317.4 208.4L315.3 209.5L312.8 211.1L312.5 213.5L312.3 216.0L312.0 218.8L312.8 221.2L314.1 223.1L315.8 224.1L317.1 224.7L319.2 224.1L321.1 223.7L322.4 222.2L322.7 220.7L325.2 220.1L327.4 219.9L326.7 222.1L326.5 224.2L325.5 224.2L325.7 226.7L324.7 227.9L326.7 228.1L329.2 227.9L331.4 228.4L332.7 229.4L332.4 232.1L332.1 234.6L332.7 236.1L334.1 237.5L335.7 238.1L337.9 237.1L339.9 237.6L341.2 238.9L340.9 240.1L339.6 239.1L338.1 238.5L336.7 240.1L335.2 239.2L332.9 238.8L332.1 237.5L329.8 236.5L329.1 234.8L327.4 232.8L326.5 231.8L324.0 231.4L321.4 230.8L319.4 229.8L317.3 227.7L314.7 228.1L312.4 227.8L310.4 226.9L306.7 225.5L303.8 224.5L301.7 222.8L300.7 221.4L301.3 219.8L300.6 218.2L299.0 216.5L297.3 214.8L295.4 213.8L294.6 212.0L292.9 210.7L291.4 209.2L290.1 206.8L287.9 205.4L288.0 207.4L289.7 209.5L290.6 210.8L291.7 213.4L293.6 216.0L294.7 217.7L294.1 217.2L291.6 215.2L291.3 213.1L288.6 211.7L288.6 209.8L286.6 208.1L285.0 205.5L284.4 204.3L282.6 202.3L279.4 201.3L277.7 198.4L276.7 196.7L275.0 195.0L274.7 193.0L274.3 190.8L273.9 188.6L274.7 184.7L274.5 182.7L273.6 181.6L275.9 182.0L276.4 183.6L276.7 181.8L275.9 180.7L274.6 179.4L272.5 178.4L269.7 177.6L268.7 175.6L266.2 173.3L265.2 171.3L263.9 170.0L261.6 168.0L258.9 166.4L256.8 167.4L253.9 166.4L251.9 165.4L249.5 165.2L246.2 165.2L242.8 164.0L240.4 164.4L238.2 165.4L234.9 166.2L236.1 164.3L233.8 165.0L231.8 166.3L232.5 167.4L230.4 168.3L227.8 169.9L225.2 170.9L222.5 171.4L219.5 172.4L216.2 172.9L219.0 171.7L221.1 170.6L224.7 168.7L227.1 167.2L224.8 167.0L220.5 167.0L219.8 165.2L217.4 165.2L215.5 164.3L215.8 163.2L214.5 162.4L216.0 161.3L217.1 160.4L221.1 160.0L222.1 158.4L219.7 158.4L216.1 158.6L214.1 158.3L212.0 157.4ZM338.8 153.3L343.1 153.3L343.1 154.7L339.5 154.7ZM287.4 140.2L282.4 140.8L276.7 141.6L280.3 142.3L285.3 141.2L287.4 140.2ZM306.7 145.6L312.5 145.0L318.8 145.2L322.4 145.9L322.2 147.3L318.8 147.9L316.0 148.2L312.7 148.0L309.4 146.7L306.7 145.6ZM355.6 224.2L357.9 224.4L357.6 224.9L355.6 224.9ZM303.1 138.2L308.8 137.9L314.5 138.6L316.0 139.6L310.3 140.0L304.6 139.6ZM341.2 238.8L341.9 238.2L343.6 236.4L344.5 234.9L346.6 234.5L348.5 233.6L349.4 232.9L350.2 233.8L348.9 234.4L349.4 235.8L349.8 236.9L350.5 234.5L351.9 234.2L354.1 235.1L357.1 235.5L359.5 236.1L361.6 235.4L363.3 235.5L361.9 236.4L364.5 238.4L365.9 238.5L367.3 239.8L368.8 240.9L370.2 242.1L371.9 242.2L374.5 242.5L376.2 243.2L377.9 244.6L378.7 246.3L379.5 248.1L380.3 249.2L379.7 250.6L382.2 251.8L383.7 251.5L386.6 252.6L388.3 254.3L390.9 254.6L395.1 254.9L398.4 257.5L400.9 258.1L401.6 260.6L401.9 262.8L400.4 264.5L398.7 266.3L397.4 268.5L396.0 270.3L395.7 275.2L395.0 277.0L394.4 278.9L393.1 281.0L391.7 282.9L389.9 283.5L387.7 284.0L385.2 285.0L383.2 286.6L382.2 288.3L382.3 290.9L380.9 292.4L379.2 294.7L377.0 296.7L375.3 298.9L373.9 300.0L371.3 300.4L369.0 299.7L368.2 299.0L368.3 300.1L369.8 301.4L370.5 302.6L369.3 305.0L367.0 305.9L364.2 306.3L362.9 306.7L362.6 308.3L361.6 309.3L358.8 309.1L359.6 311.1L360.8 311.6L358.9 312.0L358.3 314.1L356.6 314.8L355.2 316.7L356.5 317.8L357.6 318.8L355.8 320.1L354.8 321.7L353.2 322.4L352.9 324.3L353.9 325.3L352.3 325.3L353.6 326.5L355.3 328.0L357.3 329.0L355.5 329.5L353.6 329.1L351.6 329.3L348.9 328.4L346.9 327.0L345.2 325.1L344.2 322.6L343.8 320.1L344.6 318.1L343.6 317.1L344.9 315.8L346.1 314.1L347.1 311.3L346.2 310.4L346.4 308.0L346.8 306.6L346.5 303.7L347.9 301.4L348.9 299.0L349.5 296.9L349.4 294.2L349.6 291.9L350.5 289.4L351.1 286.7L350.9 283.9L351.5 281.0L351.3 278.5L351.1 276.7L349.6 275.9L347.9 274.7L345.9 273.3L343.9 272.3L342.6 270.3L341.6 268.0L340.1 265.5L338.8 262.6L337.5 260.6L335.7 259.3L335.5 257.3L336.8 255.8L337.7 254.5L336.1 253.8L336.1 252.2L336.9 250.9L337.4 249.5L338.8 248.2L339.4 247.1L340.9 245.9L341.4 243.9L340.9 241.5L340.4 240.4L341.2 238.8ZM315.3 145.0L321.7 145.0L322.4 146.7L318.1 147.5L315.3 146.5ZM337.1 159.6L334.8 160.9L331.8 161.4L328.1 160.3L327.8 158.2L329.4 157.2L332.4 156.9L335.5 158.7L337.1 159.6ZM323.1 141.5L328.8 140.5L333.1 140.8L330.2 141.9ZM206.4 159.7L210.4 160.3L210.8 160.6L208.3 160.7L206.4 160.2ZM282.0 148.6L284.2 146.9L287.7 145.9L292.4 147.0L297.3 145.9L301.8 145.6L307.0 147.5L305.4 149.7L306.8 151.9L302.3 152.7L296.6 152.3L289.0 152.7L284.6 151.7L284.6 150.2L282.0 148.6ZM706.2 149.0L708.3 148.6L708.3 149.6ZM194.7 148.6L198.3 148.9L198.3 149.3L194.7 149.6ZM443.1 199.5L444.1 199.5L444.9 200.3L446.4 200.1L447.8 200.4L448.4 200.4L449.8 199.7L451.4 199.4L452.2 198.8L453.6 198.4L456.1 198.1L458.3 198.0L459.1 198.3L460.5 197.7L462.1 197.7L463.5 198.0L465.1 197.4L466.1 197.5L466.1 198.3L467.2 197.7L467.3 198.0L466.6 198.7L466.6 199.4L467.1 199.7L466.9 201.0L465.9 201.7L466.2 202.4L467.1 202.4L467.8 203.1L469.6 203.8L471.3 204.0L473.2 204.5L473.9 205.8L475.8 206.4L477.2 206.7L478.7 207.4L479.5 207.1L480.2 206.4L479.7 205.3L480.2 204.7L481.3 204.0L482.2 203.8L484.2 204.1L484.6 204.7L485.2 204.7L487.0 205.1L487.5 205.5L489.3 205.5L490.7 206.0L492.2 206.4L493.9 206.1L494.4 205.7L495.7 205.5L496.7 205.8L497.6 206.0L497.4 206.3L498.4 206.4L499.7 206.4L500.4 206.1L501.3 208.5L500.9 210.5L500.3 211.0L499.9 211.2L499.4 210.2L499.0 209.8L498.2 208.0L497.6 208.1L498.2 209.7L499.0 211.1L500.1 213.4L500.7 214.1L502.4 216.5L502.1 216.7L502.1 217.7L503.9 219.0L504.6 220.7L504.4 222.4L505.0 224.1L506.3 224.9L507.0 226.1L507.6 227.9L508.6 229.1L510.3 229.9L511.0 230.8L511.8 231.7L512.3 232.4L513.0 232.5L513.3 232.9L513.3 233.6L512.4 233.9L513.0 234.2L513.6 234.5L514.4 235.8L515.1 235.8L516.6 235.4L518.0 235.2L519.3 234.8L520.6 234.6L521.3 234.4L523.3 233.9L524.4 233.9L524.3 235.5L524.0 235.9L523.7 237.5L523.0 239.1L522.1 240.9L520.8 243.1L519.6 244.6L518.0 246.5L516.6 247.8L514.4 249.1L513.0 250.2L511.4 251.9L510.8 253.1L509.9 253.6L509.0 254.3L508.3 255.9L507.4 257.3L506.7 259.0L506.9 259.9L507.7 260.3L507.9 260.8L507.4 262.0L507.9 263.6L508.4 265.0L509.0 265.3L509.3 266.0L509.1 267.5L509.4 270.9L509.7 271.6L509.3 272.6L508.7 273.6L507.9 274.5L506.4 275.0L504.9 275.7L503.3 277.3L502.7 277.5L501.7 278.6L501.1 278.9L501.0 279.9L501.7 281.0L502.0 281.7L502.0 282.2L502.3 282.2L502.1 283.6L502.0 284.2L502.3 284.4L502.1 285.0L501.4 285.6L500.3 286.0L498.6 286.9L498.0 287.3L498.2 287.9L498.4 288.0L498.0 289.9L497.9 291.0L497.4 291.7L496.4 292.4L496.2 292.6L495.6 293.3L495.2 294.0L494.4 295.0L492.7 296.6L491.7 297.4L490.7 298.0L489.2 298.6L488.3 299.0L487.5 298.9L486.7 299.1L485.2 298.9L483.7 299.0L482.2 299.6L481.0 299.7L480.2 300.3L479.5 300.3L478.9 299.9L478.5 299.7L477.8 299.1L477.8 299.3L477.5 299.0L477.6 298.1L477.0 297.2L477.5 296.9L477.5 295.9L476.6 294.4L475.9 293.3L475.9 293.3L474.8 291.4L473.8 290.3L473.2 289.3L472.5 286.9L472.0 284.7L472.0 283.0L471.9 282.2L471.3 281.6L470.6 280.5L469.8 278.7L469.5 277.7L468.3 276.5L468.2 275.3L468.0 274.5L468.8 271.9L468.9 271.2L469.3 269.9L470.9 267.8L471.0 266.8L471.0 265.9L470.6 265.5L470.2 264.6L469.9 263.8L469.9 263.4L470.3 262.9L469.9 261.5L469.6 260.5L468.9 259.6L469.0 259.3L468.9 258.9L468.5 257.8L467.3 256.3L465.9 254.9L464.9 253.6L464.1 252.2L464.1 251.8L464.3 251.3L464.8 250.2L465.1 249.2L464.8 248.9L465.2 247.3L465.5 246.2L464.9 245.4L464.2 245.1L463.9 244.4L463.6 244.2L463.6 243.8L462.2 244.4L461.6 244.2L461.1 244.6L459.9 244.5L459.2 243.6L458.6 242.6L457.6 241.6L456.6 241.6L455.4 241.6L454.2 241.9L453.1 242.2L450.8 243.1L449.9 243.5L448.6 243.9L447.4 243.5L446.8 243.5L445.8 243.2L444.9 243.2L443.2 243.5L442.2 243.9L440.8 244.5L440.5 244.4L440.1 244.4L438.7 243.5L437.4 242.6L436.1 241.9L435.2 240.9L434.8 240.8L433.8 240.2L433.1 239.5L432.8 238.9L432.7 237.9L432.0 237.1L431.4 236.5L430.7 236.1L430.5 235.4L430.4 235.1L430.0 234.9L429.1 234.2L428.5 234.2L428.2 233.8L428.2 233.5L427.8 233.2L427.7 232.9L427.5 231.8L427.7 231.2L427.1 230.1L426.4 229.7L427.0 229.4L427.7 228.4L428.0 227.7L428.5 227.1L428.5 226.1L428.2 226.1L428.5 224.8L428.2 223.4L428.1 222.7L428.2 221.9L428.0 221.2L427.1 220.7L427.2 220.1L427.3 219.4L427.8 219.0L428.2 218.2L428.2 217.8L428.7 216.8L429.5 215.8L430.0 215.7L430.4 214.8L431.0 213.1L431.8 212.7L432.8 211.2L433.5 210.7L434.8 210.5L435.9 209.5L436.7 209.1L437.8 208.0L437.5 206.1L438.1 205.0L438.2 204.1L439.1 203.3L440.5 202.5L441.7 202.0L442.7 200.5L443.1 199.5ZM194.7 379.1L194.7 371.0L252.1 372.0L252.1 364.1L231.9 363.9L218.0 363.0L244.1 360.9L256.0 357.6L268.0 356.0L283.2 356.7L295.0 357.6L304.4 353.7L316.7 354.8L325.5 354.9L340.6 355.1L342.2 351.1L350.6 345.5L358.6 342.1L365.6 339.5L373.7 338.1L373.6 339.5L366.6 343.1L360.6 347.1L358.6 350.1L366.2 354.1L356.6 357.5L346.6 359.5L340.6 362.1L345.2 365.5L370.6 367.6L385.7 363.9L403.8 365.5L415.8 360.2L430.8 354.9L440.5 352.4L472.3 350.2L491.4 351.2L506.1 349.2L528.4 344.8L548.5 348.1L549.7 353.4L551.4 349.1L565.5 347.1L584.6 345.4L607.1 345.1L643.8 344.2L660.4 346.8L678.8 350.9L694.6 352.5L685.5 357.5L693.7 360.9L680.5 364.2L690.5 369.2L708.3 370.9L708.3 379.1ZM654.8 265.9L655.8 267.6L656.2 268.9L656.4 270.6L657.8 270.9L658.9 272.0L658.8 273.3L660.1 276.0L659.9 277.6L661.9 278.5L663.8 279.7L664.5 281.0L665.6 282.2L666.6 282.9L666.9 284.2L669.6 286.7L669.9 287.9L670.5 291.3L669.9 294.0L669.6 295.7L669.1 297.2L667.5 298.4L666.5 300.9L665.5 304.0L663.1 304.6L661.8 305.1L660.2 306.3L659.1 305.7L658.2 304.7L656.4 306.0L653.5 305.3L652.1 304.9L650.7 304.0L650.7 302.1L648.5 301.4L649.0 299.7L648.0 300.7L646.7 301.0L648.1 298.6L647.5 299.1L645.5 300.4L644.4 299.9L644.4 299.0L643.5 298.0L642.8 297.4L640.2 296.3L638.8 295.6L636.3 295.7L632.8 296.7L631.4 296.6L627.8 299.0L624.6 298.9L622.6 299.1L619.8 300.7L617.8 300.6L616.4 299.7L615.6 299.4L616.6 298.1L616.7 296.6L615.6 292.7L615.0 291.3L613.3 287.9L613.9 287.0L613.3 285.4L613.9 283.6L613.7 282.7L614.4 281.7L615.0 281.7L618.0 280.2L619.0 280.2L621.0 279.6L623.8 278.7L624.7 278.0L625.8 276.6L626.0 275.3L627.0 274.0L628.1 275.0L627.7 274.3L628.8 274.0L629.0 272.9L630.1 271.6L631.4 271.0L632.8 270.6L634.7 271.9L636.4 272.0L636.1 271.2L637.8 268.5L639.4 268.2L640.7 267.9L639.5 266.8L640.4 266.5L642.1 267.5L643.2 267.8L644.5 268.0L646.0 267.6L646.8 268.3L646.2 269.6L645.5 269.6L644.8 271.6L646.0 272.9L647.1 273.5L649.8 274.7L650.7 275.6L652.5 275.5L653.1 274.0L653.5 272.2L653.5 270.2L653.4 269.0L653.8 268.8L653.7 267.6L654.2 266.8L654.2 266.3L654.8 265.9ZM607.1 247.9L608.0 247.8L609.0 248.2L610.1 247.8L610.4 246.8L612.7 246.2L614.1 244.1L616.3 242.9L617.3 241.9L618.0 240.8L619.4 241.5L620.7 243.1L621.6 242.9L619.8 244.2L619.7 244.8L618.8 246.1L620.0 247.3L619.7 248.1L621.3 249.3L619.6 249.5L619.1 250.5L619.1 251.8L617.8 252.8L617.7 254.2L617.1 256.3L615.6 256.3L614.9 255.6L613.1 255.1L611.4 255.6L610.9 254.9L609.9 255.1L608.7 254.8L608.6 252.9L607.9 252.5L607.1 251.3L607.0 250.1L607.1 247.9ZM463.8 189.4L465.1 189.7L465.2 191.6L464.2 191.4L463.8 189.4ZM485.0 200.3L489.0 200.3L488.9 200.7L486.7 200.8L485.0 200.3ZM497.6 200.5L500.9 199.7L500.0 200.8L497.9 201.1ZM606.4 223.2L607.4 222.1L609.1 221.9L609.9 222.7L609.3 223.9L607.7 224.7L606.6 224.2L606.4 223.2ZM442.9 176.1L442.9 174.7L442.8 173.7L443.5 173.0L442.7 171.9L440.7 171.7L439.7 172.1L439.2 173.0L437.2 173.3L437.4 174.4L437.8 175.6L436.7 176.6L437.5 177.1L439.8 176.7L441.7 176.1L442.9 176.1ZM601.6 260.3L602.9 259.0L604.6 259.1L606.0 259.5L606.4 260.3L609.1 260.5L609.6 259.9L612.1 260.5L612.6 261.5L614.9 261.8L614.7 263.1L612.1 262.6L610.6 262.5L609.3 262.2L607.6 261.6L606.6 261.5L606.0 261.8L603.4 261.2L603.2 260.5L601.9 260.5L601.6 260.3ZM522.1 268.5L523.0 270.0L523.4 272.3L523.1 273.4L522.7 272.6L522.4 274.6L522.0 276.2L520.7 279.9L519.8 282.6L518.7 286.2L517.6 286.6L516.3 287.2L515.4 286.7L514.3 286.3L514.0 285.6L513.8 284.3L513.3 283.2L513.3 282.2L513.4 281.0L514.1 280.9L514.1 280.3L514.8 279.3L515.0 278.3L514.6 277.7L514.3 276.7L514.2 275.5L514.7 274.7L514.8 273.7L515.6 273.7L516.4 273.4L517.0 273.2L517.6 273.2L518.4 272.3L519.6 271.5L520.0 270.8L519.8 270.2L520.4 270.3L521.1 269.3L521.3 268.5L521.7 267.8L522.1 268.5ZM638.4 252.3L640.4 251.2L642.7 251.8L643.2 254.6L644.8 255.5L647.5 252.8L650.1 253.6L652.7 254.3L655.1 255.3L657.8 256.2L658.8 256.9L659.5 257.8L662.1 259.3L661.5 261.2L662.8 262.0L664.5 263.6L665.1 264.8L666.6 265.3L665.5 265.9L662.5 265.0L660.6 263.4L659.8 262.2L657.9 261.5L656.8 261.9L655.9 262.3L656.1 263.5L654.9 263.9L652.7 263.6L651.1 262.2L649.7 262.6L648.5 262.5L647.8 262.6L648.4 261.5L649.4 261.0L649.0 259.5L648.2 258.3L645.5 257.1L644.4 257.1L642.2 255.6L641.2 256.5L640.1 254.8L641.4 254.2L639.5 252.9L638.4 252.3ZM697.7 299.9L699.5 301.0L700.6 302.3L701.6 303.7L702.3 303.1L702.7 304.3L704.6 304.9L706.2 304.4L705.9 305.7L705.3 306.6L704.0 307.6L702.6 309.6L701.5 310.1L700.7 309.6L701.5 308.4L700.7 307.6L699.5 307.0L700.6 306.0L700.7 304.0L700.2 302.7L698.5 300.9L697.7 299.9ZM698.0 308.4L698.6 309.6L700.0 309.6L700.0 310.3L698.6 312.0L697.9 312.6L698.5 313.3L696.2 313.7L695.7 314.7L694.9 316.1L693.7 316.8L693.0 317.1L691.8 317.1L690.9 316.7L689.3 316.6L689.0 316.1L689.8 315.0L691.6 313.6L692.5 313.3L694.7 312.0L695.6 311.3L696.3 310.3L697.0 309.1L698.0 308.4ZM463.2 192.1L465.5 192.3L465.3 194.7L463.8 195.1L463.5 194.3L463.2 192.1ZM634.1 255.2L638.1 254.9L637.8 256.1L634.8 255.8L634.1 255.2ZM469.2 196.4L473.8 196.0L473.0 198.3L469.2 197.0ZM565.5 236.8L566.8 237.4L568.2 239.9L567.9 241.4L566.5 242.2L565.6 241.5L565.2 238.9L565.5 236.8ZM621.0 254.6L621.6 258.5L622.1 258.6L623.3 258.5L623.3 255.3L624.1 254.3L624.8 257.2L626.7 257.1L625.8 254.9L624.4 253.2L625.0 252.1L627.4 251.5L626.4 252.1L624.8 249.9L627.0 249.9L629.1 250.1L630.1 248.6L629.0 249.2L624.8 249.2L623.0 250.3L622.4 251.6L621.0 254.6ZM587.5 242.8L588.3 242.9L590.6 243.2L591.9 244.5L592.9 245.5L595.0 247.6L596.6 247.6L597.7 248.6L598.6 249.8L599.6 250.5L599.0 251.6L600.4 252.2L601.2 253.9L602.2 254.1L602.9 255.1L602.6 256.8L602.4 259.0L600.9 259.0L599.7 257.8L597.9 256.6L597.3 255.8L596.2 254.6L595.5 253.6L594.3 251.6L593.2 250.3L592.7 249.2L592.2 248.1L590.9 247.1L590.2 245.9L589.0 245.1L587.6 243.5L587.5 242.8ZM615.6 262.2L617.0 262.6L619.8 262.5L621.3 262.9L624.1 262.6L627.0 262.3L627.0 263.2L624.1 263.3L621.3 263.3L618.4 263.5L615.6 263.2ZM657.9 308.7L660.4 309.3L663.1 309.0L663.2 310.7L662.5 312.3L661.1 312.8L659.8 312.7L658.9 311.6L657.9 309.4L657.9 308.7ZM628.4 264.8L630.0 263.5L633.1 262.6L632.1 263.4L629.8 265.0L627.8 265.5L628.4 264.8Z" fill="#336633" stroke="#000" stroke-width="1" stroke-linejoin="round"/>
<path d="M363.8 155.6L361.3 157.4L359.3 159.0L359.8 160.6L357.6 161.3L354.2 161.3L349.6 160.6L345.4 158.4L340.8 158.9L341.1 157.0L346.2 155.3L347.5 154.0L345.1 152.3L339.5 151.3L335.7 150.7L329.8 150.6L325.1 149.5L324.1 145.6L329.5 146.2L335.9 145.5L342.4 146.7L347.1 148.5L350.2 149.5L353.8 150.2L355.8 151.6L357.6 153.7L362.3 154.9L363.8 155.6ZM282.0 148.6L284.2 146.9L287.7 145.9L292.4 147.0L297.3 145.9L301.8 145.6L307.0 147.5L305.4 149.7L306.8 151.9L302.3 152.7L296.6 152.3L289.0 152.7L284.6 151.7L284.6 150.2L282.0 148.6ZM272.9 148.0L273.6 146.0L274.3 144.6L279.6 144.5L285.3 145.3L286.9 146.0L281.7 148.5L278.4 148.9L272.9 148.0ZM306.7 145.6L312.5 145.0L318.8 145.2L322.4 145.9L322.2 147.3L318.8 147.9L316.0 148.2L312.7 148.0L309.4 146.7L306.7 145.6ZM320.2 143.2L316.3 142.0L321.0 141.2L330.2 141.0L337.1 141.7L336.9 143.9L328.8 144.3L321.0 144.2L320.2 143.2ZM363.0 133.2L354.5 132.3L343.1 132.0L328.8 133.2L320.8 134.9L315.3 136.0L314.5 138.2L319.2 139.5L325.1 139.2L328.1 139.9L324.5 141.5L335.9 141.7L339.6 141.2L343.5 138.9L347.2 138.2L350.2 137.0L357.3 135.9L363.0 133.2ZM284.6 141.7L292.4 141.6L297.4 141.3L300.6 142.3L301.0 143.3L294.6 143.7L289.1 144.2L283.7 144.2L286.7 142.7L284.6 141.7ZM312.7 142.2L311.0 141.0L307.1 140.8L304.4 142.2L305.7 143.6L311.7 143.6L312.7 142.2ZM287.4 140.2L282.4 140.8L276.7 141.6L280.3 142.3L285.3 141.2L287.4 140.2ZM327.4 135.6L322.4 134.8L315.5 135.9L315.0 137.8L318.8 138.5L325.5 137.5L327.4 135.6ZM288.9 139.6L294.6 139.0L301.7 139.3L303.8 140.5L297.4 140.9L290.3 140.5ZM303.1 138.2L308.8 137.9L314.5 138.6L316.0 139.6L310.3 140.0L304.6 139.6ZM314.5 142.9L318.8 142.3L319.5 143.3L315.3 144.0ZM315.3 145.0L321.7 145.0L322.4 146.7L318.1 147.5L315.3 146.5ZM308.8 151.5L314.5 151.5L315.3 153.2L311.0 153.2ZM338.8 153.3L343.1 153.3L343.1 154.7L339.5 154.7ZM335.9 145.3L342.4 145.7L340.2 146.7ZM300.3 139.9L303.1 140.0L301.7 140.6ZM323.1 141.5L328.8 140.5L333.1 140.8L330.2 141.9ZM337.1 159.6L334.8 160.9L331.8 161.4L328.1 160.3L327.8 158.2L329.4 157.2L332.4 156.9L335.5 158.7L337.1 159.6ZM347.1 138.8L352.3 137.8L358.1 135.3L362.3 133.9L368.8 133.3L380.2 132.9L388.7 132.0L400.1 131.3L413.0 131.5L423.0 132.6L417.3 133.3L433.0 134.0L428.0 136.0L424.4 137.3L425.5 139.9L423.0 141.6L424.7 143.5L421.0 144.9L422.7 146.2L419.8 147.7L419.4 149.6L415.1 150.2L419.4 150.6L413.7 152.7L407.3 153.5L402.7 155.4L398.7 156.7L395.0 157.3L393.4 159.2L391.2 160.4L390.3 162.9L389.9 165.0L386.9 164.2L383.2 163.9L381.3 162.7L379.5 160.6L377.9 159.0L376.0 156.9L375.0 154.7L376.0 153.0L378.7 152.2L379.3 150.5L376.6 150.2L373.7 149.6L374.0 148.6L372.6 146.6L370.8 144.7L368.3 143.0L363.8 141.9L356.6 142.2L349.5 140.8L356.2 139.9L347.1 138.8ZM638.3 201.7L639.7 200.8L641.7 199.8L644.1 199.7L645.5 199.3L646.7 197.4L647.4 197.8L649.7 196.7L650.8 195.5L651.2 193.6L651.1 192.7L651.7 191.8L653.2 191.6L653.5 193.4L654.1 194.3L652.9 196.1L652.7 197.4L652.5 198.8L652.1 200.5L651.1 200.7L650.2 200.3L649.5 201.3L647.2 201.1L646.8 201.7L645.5 202.7L644.2 202.3L644.7 201.1L642.0 201.4L640.1 202.1L638.3 201.7ZM651.2 191.6L651.4 189.7L651.9 188.8L653.2 188.7L653.8 186.4L654.1 185.7L655.9 187.1L658.8 187.4L659.1 188.8L656.9 189.4L655.8 190.7L653.5 189.8L652.5 191.1L651.2 191.6ZM636.7 203.1L638.0 202.3L639.2 202.7L639.7 204.0L639.0 205.8L638.0 206.4L637.3 205.8L637.4 204.8L636.4 203.5L636.7 203.1ZM640.7 203.5L641.4 201.8L643.5 201.8L643.8 202.4L643.0 203.3L641.7 203.1L640.7 203.5ZM654.1 185.0L656.2 184.6L655.5 182.8L655.9 180.3L657.4 180.7L655.8 177.4L655.8 175.1L655.4 173.1L654.4 173.3L654.7 176.4L653.8 177.9L654.1 182.1L653.9 183.8L654.1 185.0ZM623.6 224.2L625.4 224.2L626.0 225.7L625.8 227.4L625.0 227.9L624.7 229.4L625.6 230.5L627.0 230.9L628.4 232.6L627.4 232.1L626.4 231.8L625.1 230.8L623.6 230.2L623.6 229.4L622.6 228.7L622.6 227.2L623.1 227.8L623.3 225.5L623.6 224.2ZM625.6 240.8L627.0 239.9L627.8 239.5L628.7 238.9L630.1 237.8L630.5 236.6L631.5 237.4L631.8 238.6L632.0 240.1L631.5 241.6L631.0 240.2L630.4 240.9L630.7 242.1L629.8 242.6L628.7 241.8L628.4 240.8L627.4 240.1L625.6 240.8ZM625.6 233.6L627.1 234.6L628.4 234.5L629.8 232.8L631.0 234.9L629.8 236.4L628.8 236.2L627.7 237.1L626.4 237.2L625.6 235.8L625.6 233.6ZM622.8 217.7L624.1 215.0L625.4 215.0L625.3 216.4L624.0 219.2L623.0 218.1L622.8 217.7ZM443.4 179.1L445.1 178.9L446.6 178.4L448.6 178.3L450.4 178.1L452.9 177.9L453.5 177.4L452.5 177.1L453.9 176.1L453.9 175.3L452.2 175.1L451.8 174.3L450.6 173.1L449.8 172.7L449.2 171.3L448.5 170.9L447.2 170.7L447.8 170.3L448.6 169.3L448.9 168.4L446.6 168.3L445.8 168.4L447.2 167.0L444.4 167.0L443.5 167.9L443.2 169.0L443.5 170.3L442.8 170.9L443.7 171.6L444.5 172.1L444.4 172.6L446.4 172.3L446.6 173.1L447.2 173.7L447.1 174.4L444.9 174.6L445.1 175.4L445.7 176.0L444.1 176.7L445.5 176.9L447.2 177.1L445.5 177.6L443.4 179.1ZM467.2 138.0L474.3 136.5L482.9 135.9L490.0 136.3L483.6 138.0L480.0 139.3L477.2 141.5L472.2 140.5L467.2 138.0ZM525.7 148.6L530.0 149.9L534.2 149.9L530.7 147.2L532.1 145.0L537.1 142.5L545.7 141.0L549.2 140.9L543.5 142.9L535.7 144.9L532.8 146.7L532.1 148.6L525.7 148.6ZM587.7 135.8L589.9 137.9L594.9 137.6L600.6 138.6L603.4 137.5L595.6 134.8L587.7 135.8ZM645.5 143.6L651.2 145.3L659.8 143.3L665.5 143.3L662.6 141.9L652.7 142.2L645.5 143.6ZM518.6 135.8L530.0 134.6L541.4 135.3L534.2 136.5L522.8 136.5L518.6 135.8ZM634.0 247.5L635.0 248.5L634.1 249.6L634.8 251.8L633.5 250.9L633.3 249.2L634.0 247.5ZM663.1 258.6L665.5 258.1L667.9 257.5L668.9 256.6L668.4 258.5L665.9 259.6L663.1 258.6ZM330.4 219.4L332.4 218.0L334.9 217.5L337.9 218.1L340.8 219.5L343.1 220.4L345.5 221.7L343.6 222.2L340.9 222.2L340.6 220.9L339.2 219.8L336.7 219.2L334.5 218.8L332.8 219.2L330.4 219.4ZM345.4 224.1L347.8 222.2L351.3 222.4L353.9 224.1L351.6 224.7L349.4 225.4L346.8 224.7L345.4 224.1ZM339.8 224.4L342.6 224.7L341.8 225.1L340.2 224.8L339.8 224.4ZM268.3 178.1L272.5 178.9L275.4 181.4L273.5 181.1L269.6 179.3L268.3 178.1ZM261.8 173.3L263.6 173.6L264.3 176.0L261.8 174.7ZM230.9 168.9L234.4 168.4L233.2 167.6L231.1 168.3ZM372.3 177.0L370.5 179.3L368.3 180.4L366.9 181.6L366.9 182.7L371.2 182.7L372.6 183.6L375.2 184.1L376.2 182.7L375.6 181.4L374.9 180.3L372.3 179.7L372.3 177.0Z" fill="#336633" stroke="#000" stroke-width="2" stroke-linejoin="round"/>
<path d="M443.5 199.3L442.4 198.1L440.9 197.5L438.8 197.8L438.9 196.0L437.9 195.3L438.7 193.6L438.9 191.4L438.8 190.0L438.2 189.1L440.1 188.3L442.9 188.4L445.8 188.7L448.9 188.7L449.6 187.1L449.8 185.0L448.4 183.4L445.2 182.3L444.9 181.3L447.2 181.0L449.2 181.1L448.8 179.7L451.8 180.0L453.8 179.0L455.1 177.7L456.6 177.1L457.9 176.0L458.6 174.7L461.5 174.1L463.6 174.1L463.8 172.3L463.1 171.3L463.2 169.6L465.1 169.1L466.6 168.3L466.2 169.9L467.1 170.3L465.5 172.0L467.1 173.6L468.6 173.3L470.9 173.0L472.3 173.9L475.0 172.9L477.9 172.4L479.5 173.0L481.7 171.9L481.6 169.6L482.9 168.4L484.6 169.3L485.9 169.3L486.3 167.4L485.0 166.2L488.5 165.6L491.4 165.7L494.6 165.2L492.6 164.3L489.3 164.4L484.2 165.2L482.0 163.9L482.3 161.3L483.5 159.6L486.7 158.0L487.7 157.2L485.7 156.7L483.2 157.0L481.7 158.2L480.0 159.9L477.2 161.2L476.2 163.2L476.0 164.2L478.0 164.9L477.5 166.0L475.5 167.0L475.0 168.7L474.2 170.6L472.0 171.3L469.9 171.6L469.5 170.4L468.5 168.4L467.5 166.6L466.5 165.9L465.5 166.4L463.5 167.4L461.5 167.9L459.5 166.7L458.8 164.7L458.5 162.9L459.2 161.4L462.1 160.7L464.3 159.9L466.5 158.6L468.6 157.0L470.3 155.0L472.6 153.9L473.8 152.6L475.8 152.0L477.9 151.0L480.7 150.7L483.6 150.2L486.5 149.3L489.3 149.5L492.2 149.2L494.3 150.5L496.0 151.0L498.6 151.6L502.1 151.9L505.7 152.9L509.3 153.9L510.3 155.3L508.6 156.2L505.4 156.3L501.4 155.9L499.3 155.7L501.1 157.6L500.7 158.6L503.7 159.3L505.1 159.6L505.7 158.4L504.3 157.9L508.0 158.4L509.4 158.3L508.3 157.0L511.7 155.7L514.3 156.2L514.6 154.0L513.4 152.7L517.1 153.3L517.8 154.5L520.7 154.2L524.3 153.2L527.7 152.6L530.8 153.0L533.5 152.9L535.7 152.6L537.8 151.0L542.2 151.5L546.4 152.3L548.7 153.2L550.2 152.6L548.9 151.3L547.1 150.7L546.8 149.3L549.4 147.0L550.8 146.3L553.4 146.7L555.4 147.6L554.8 149.2L555.5 150.6L554.9 152.5L556.5 153.0L555.4 155.2L557.4 154.5L558.4 153.0L557.8 152.3L556.8 152.0L556.5 150.5L557.5 149.3L558.8 148.6L559.1 147.5L560.6 147.9L562.8 147.5L565.1 147.3L566.6 145.6L567.8 145.5L575.3 145.2L574.2 144.3L575.9 143.5L580.3 142.7L584.0 142.3L590.2 142.2L594.2 141.5L595.9 141.0L600.3 139.8L602.9 140.2L604.4 141.5L610.0 141.2L613.1 141.9L614.0 143.2L612.4 143.6L607.6 144.7L609.3 145.0L612.7 145.2L613.6 146.0L616.4 145.3L621.0 145.6L627.3 146.5L632.0 145.7L635.0 146.5L636.5 147.9L635.7 149.0L638.8 149.6L640.2 148.2L642.7 148.5L645.0 148.3L648.2 148.7L651.1 148.6L650.7 147.3L653.1 146.7L658.5 147.5L664.8 147.6L666.1 148.5L669.6 149.6L675.5 149.3L678.3 149.5L679.5 150.6L679.3 151.2L681.1 151.6L685.5 151.2L690.9 151.3L693.5 152.6L695.2 152.2L694.0 151.2L694.7 150.6L699.2 151.0L702.7 150.9L706.3 151.6L708.3 152.2L708.3 157.9L706.4 158.6L704.6 158.4L705.9 159.2L706.7 160.3L707.4 161.3L704.6 161.4L700.6 162.4L699.3 162.7L697.2 163.6L695.0 164.6L694.5 165.2L692.5 164.2L688.8 165.3L688.0 164.7L686.8 165.4L684.8 165.2L684.3 166.2L682.6 167.6L682.5 168.4L684.3 168.4L683.8 170.4L682.3 171.7L682.8 172.3L680.3 173.1L679.8 174.7L677.6 175.1L677.2 176.6L675.2 177.9L674.6 176.9L673.9 169.6L675.2 168.7L675.2 168.1L677.5 167.7L680.1 166.0L682.5 164.6L685.0 163.4L686.2 161.3L684.5 161.4L683.6 162.7L679.9 164.3L678.8 162.4L675.1 163.0L671.5 165.3L672.6 166.3L669.5 166.6L667.4 166.7L666.9 165.7L665.2 165.4L663.4 166.2L659.1 166.0L654.4 166.4L649.7 169.1L644.2 172.6L646.5 172.7L647.2 173.6L648.7 174.0L649.5 173.1L651.1 173.3L653.1 174.9L653.2 176.1L652.1 177.6L651.9 179.3L651.4 181.6L649.2 183.6L648.7 184.6L646.8 186.3L644.8 188.0L644.0 188.7L642.0 189.6L641.1 189.6L640.2 188.8L638.1 190.4L637.0 192.1L636.5 192.3L635.8 192.6L635.0 193.3L633.4 193.8L633.4 194.5L634.5 195.5L635.8 197.3L636.3 198.1L636.3 199.8L635.7 200.5L634.4 200.7L633.3 201.4L632.0 201.5L631.8 200.8L632.1 199.7L631.4 198.3L632.5 198.0L631.5 196.8L630.8 196.5L630.1 196.8L629.4 196.3L630.1 195.5L630.0 194.1L628.8 193.7L626.8 194.1L625.7 194.7L624.3 195.1L625.0 194.4L624.7 194.0L625.8 193.0L625.0 192.3L623.8 192.7L622.1 193.7L621.3 194.5L619.8 194.7L619.1 195.4L620.0 196.3L621.1 196.5L621.1 197.3L622.3 197.5L623.8 196.5L625.1 197.1L626.3 197.3L626.3 198.0L624.3 198.3L623.6 199.1L622.3 199.8L621.6 200.8L623.0 201.5L623.6 203.0L624.4 204.3L625.4 205.4L625.4 206.5L624.6 206.8L624.8 207.7L625.7 208.1L625.1 210.4L624.3 210.5L622.1 214.0L620.8 215.7L618.8 217.0L616.9 218.1L615.3 218.2L614.4 219.0L613.9 218.5L613.0 219.1L611.0 219.8L609.6 220.1L609.0 221.7L608.3 221.7L607.9 220.7L608.3 220.1L606.3 219.7L603.7 221.1L602.6 222.4L602.3 223.4L603.3 224.9L604.7 226.8L606.0 227.7L606.9 228.8L607.4 231.5L607.3 233.9L606.2 234.9L604.4 235.8L603.3 237.1L601.6 238.4L601.0 237.5L601.4 236.5L600.3 235.6L599.2 235.5L598.6 234.6L597.9 233.2L596.6 232.6L595.3 232.6L595.6 231.5L594.3 231.5L594.2 233.1L593.0 235.9L593.0 237.5L594.0 237.5L594.9 240.1L595.6 240.8L597.2 241.8L598.3 242.8L599.0 243.6L598.9 245.4L599.2 246.6L600.2 248.3L599.2 248.9L597.9 247.9L596.2 246.6L596.0 245.9L595.0 245.1L594.5 243.1L594.6 242.1L594.3 241.4L593.5 240.8L592.0 238.6L591.7 239.5L591.6 238.6L592.2 236.5L592.0 235.4L592.5 234.4L591.9 233.5L592.0 231.9L591.0 229.5L590.7 227.7L590.2 226.5L589.2 227.2L587.6 228.2L586.7 228.1L585.9 227.8L586.3 225.9L586.0 224.7L584.9 222.9L585.2 222.5L584.3 222.2L583.3 221.1L582.9 220.4L582.8 219.7L582.5 219.0L581.9 218.1L580.6 218.1L580.8 218.7L580.3 219.5L579.6 219.2L579.5 219.4L578.5 219.1L578.3 219.7L577.3 219.7L575.6 220.7L575.6 221.1L574.9 221.8L572.9 222.8L571.2 224.5L570.2 225.4L568.8 226.4L568.8 226.9L568.1 227.4L566.8 227.8L566.1 227.9L565.6 229.1L565.9 230.9L566.1 232.1L565.5 233.4L565.5 235.8L564.6 235.9L564.1 237.1L564.5 237.5L563.2 237.8L562.6 238.8L562.1 239.2L560.8 237.9L560.1 235.9L559.5 234.5L559.1 233.8L558.4 232.5L557.9 230.7L557.6 229.8L556.4 227.8L555.8 225.1L555.4 223.2L555.4 221.5L555.1 220.1L553.1 220.9L552.1 220.7L550.2 219.1L550.8 218.5L550.4 218.1L548.8 216.8L547.7 216.5L547.2 215.4L546.2 214.4L543.5 214.7L541.2 214.7L539.2 214.8L536.5 214.4L535.0 214.1L533.4 214.0L532.7 212.2L532.1 212.0L531.0 212.2L529.5 212.8L527.8 212.4L526.4 211.2L525.0 210.8L524.1 209.5L523.0 207.7L522.3 207.8L521.3 207.4L520.8 208.0L520.0 207.1L520.0 209.2L520.6 209.8L521.1 211.1L521.8 211.4L522.1 212.0L523.1 212.5L523.0 213.7L523.1 214.1L523.5 214.5L524.0 215.2L524.3 213.5L525.1 213.8L524.8 215.5L525.1 216.1L525.7 216.5L528.5 216.2L530.7 214.4L531.5 213.4L532.0 213.0L532.0 213.7L532.0 215.1L533.4 216.5L535.2 217.0L536.4 218.2L536.8 218.5L536.1 220.1L535.0 221.5L534.2 221.4L534.0 221.8L533.8 222.5L532.5 224.1L532.1 224.8L531.0 225.1L530.4 226.1L529.7 226.4L528.0 226.8L526.3 227.2L526.0 228.4L523.8 229.1L522.3 229.7L521.0 230.7L519.8 230.7L518.6 231.2L517.0 231.7L515.8 232.2L514.3 232.6L513.6 232.6L513.1 231.8L513.3 230.9L512.7 229.5L512.3 228.9L512.6 228.8L512.4 227.2L512.3 226.7L511.1 225.2L510.3 223.9L509.9 222.8L508.3 221.7L507.3 220.2L507.1 218.4L506.4 216.8L505.7 216.2L505.0 216.0L504.6 214.8L503.7 213.5L503.1 212.7L502.3 211.5L501.6 210.5L500.9 210.5L501.1 209.8L501.3 208.5L500.4 206.1L500.9 205.5L501.4 203.8L501.6 203.0L502.1 201.3L502.7 200.1L503.0 199.5L502.6 198.8L503.1 198.3L501.0 198.1L500.0 199.0L497.9 199.1L496.7 198.4L495.2 198.3L494.9 198.8L493.9 199.1L492.4 198.3L490.9 198.3L490.0 196.8L489.0 196.1L489.7 195.0L488.9 194.3L488.9 192.7L489.2 192.1L488.7 192.4L487.7 192.3L487.0 192.3L485.3 192.6L486.3 193.4L485.6 193.6L484.0 192.8L483.7 193.1L484.0 194.0L484.9 194.7L484.2 195.0L485.7 196.1L485.7 196.8L484.5 196.5L484.9 197.3L484.0 197.4L484.6 198.7L483.6 198.7L482.5 198.1L481.9 197.0L481.6 196.0L481.0 195.3L480.3 194.5L480.3 194.1L479.2 193.1L479.3 191.1L478.5 190.3L476.9 189.4L474.9 188.8L473.3 187.4L472.8 186.3L471.9 186.1L471.2 186.6L471.0 186.3L470.9 185.6L470.2 185.4L469.0 185.8L469.2 186.6L469.5 187.7L470.8 188.4L471.5 189.6L473.0 190.8L474.6 191.1L474.2 191.4L476.5 192.3L477.8 193.0L477.9 193.4L477.0 193.6L475.9 192.8L475.6 193.0L475.0 193.8L476.0 194.4L475.9 195.1L475.2 195.3L474.5 196.4L473.9 196.5L473.9 196.1L474.2 195.3L474.5 194.3L473.5 193.6L472.9 193.3L472.5 192.7L471.6 192.4L470.9 191.8L469.9 191.7L468.8 191.1L467.5 190.1L466.5 189.4L466.1 188.0L465.3 187.8L464.2 187.3L463.5 187.6L462.8 188.1L462.1 188.3L460.8 189.1L458.1 188.7L455.9 189.1L455.8 190.0L455.8 190.8L454.5 191.8L452.6 192.1L452.5 192.6L451.6 193.4L451.1 194.5L451.6 195.4L450.8 196.0L450.5 197.0L449.5 197.3L448.5 198.3L445.2 198.3L444.4 198.8L443.5 199.3ZM490.7 190.0L491.4 188.6L492.3 187.6L493.7 186.0L495.4 184.3L497.2 184.3L499.3 185.0L497.9 185.8L499.3 187.1L501.4 186.7L503.6 186.1L505.0 186.8L506.4 187.4L508.6 188.7L510.8 191.3L508.6 192.1L505.7 192.3L502.9 191.1L500.0 190.7L497.2 191.0L494.3 191.8L492.9 191.8L491.4 191.4L490.7 190.0Z" fill="#336633" fill-rule="evenodd" stroke="#000" stroke-width="1" stroke-linejoin="round"/>
<path d="M459.5 166.7L458.8 164.7L458.5 162.9L459.2 161.4L462.1 160.7L464.3 159.9L466.5 158.6L468.6 157.0L470.3 155.0L472.6 153.9L473.8 152.6L475.8 152.0L477.9 151.0L480.7 150.7L483.6 150.2L486.5 149.3L489.3 149.5L492.2 149.2L494.3 150.5L496.0 151.0L498.6 151.6M463.8 172.3L463.1 171.3L463.2 169.6L465.1 169.1L466.6 168.3L466.2 169.9L467.1 170.3L465.5 172.0L467.1 173.6L468.6 173.3L470.9 173.0L472.3 173.9L475.0 172.9L477.9 172.4L479.5 173.0L481.7 171.9L481.6 169.6L482.9 168.4L484.6 169.3L485.9 169.3L486.3 167.4L485.0 166.2L488.5 165.6L491.4 165.7L494.6 165.2L492.6 164.3L489.3 164.4L484.2 165.2L482.0 163.9L482.3 161.3L483.5 159.6L486.7 158.0L487.7 157.2L485.7 156.7L483.2 157.0L481.7 158.2L480.0 159.9L477.2 161.2L476.2 163.2L476.0 164.2L478.0 164.9L477.5 166.0L475.5 167.0L475.0 168.7L474.2 170.6L472.0 171.3L469.9 171.6L469.5 170.4L468.5 168.4L467.5 166.6M533.5 152.9L535.7 152.6L537.8 151.0L542.2 151.5L546.4 152.3L548.7 153.2L550.2 152.6L548.9 151.3L547.1 150.7L546.8 149.3L549.4 147.0L550.8 146.3L553.4 146.7L555.4 147.6L554.8 149.2L555.5 150.6L554.9 152.5L556.5 153.0L555.4 155.2L557.4 154.5L558.4 153.0L557.8 152.3L556.8 152.0L556.5 150.5L557.5 149.3L558.8 148.6L559.1 147.5L560.6 147.9L562.8 147.5L565.1 147.3L566.6 145.6L567.8 145.5L575.3 145.2L574.2 144.3L575.9 143.5L580.3 142.7L584.0 142.3L590.2 142.2L594.2 141.5L595.9 141.0L600.3 139.8L602.9 140.2L604.4 141.5L610.0 141.2L613.1 141.9L614.0 143.2L612.4 143.6L607.6 144.7L609.3 145.0L612.7 145.2L613.6 146.0L616.4 145.3L621.0 145.6L627.3 146.5L632.0 145.7L635.0 146.5L636.5 147.9L635.7 149.0L638.8 149.6L640.2 148.2L642.7 148.5L645.0 148.3L648.2 148.7L651.1 148.6L650.7 147.3L653.1 146.7L658.5 147.5L664.8 147.6L666.1 148.5L669.6 149.6L675.5 149.3L678.3 149.5L679.5 150.6L679.3 151.2L681.1 151.6L685.5 151.2L690.9 151.3L693.5 152.6L695.2 152.2L694.0 151.2L694.7 150.6L699.2 151.0L702.7 150.9L706.3 151.6L708.3 152.2M275.9 180.7L274.6 179.4L272.5 178.4L269.7 177.6L268.7 175.6L266.2 173.3L265.2 171.3L263.9 170.0L261.6 168.0L258.9 166.4L256.8 167.4L253.9 166.4L251.9 165.4L249.5 165.2L246.2 165.2L242.8 164.0L240.4 164.4L238.2 165.4L234.9 166.2M353.6 329.1L351.6 329.3L348.9 328.4L346.9 327.0L345.2 325.1L344.2 322.6L343.8 320.1L344.6 318.1L343.6 317.1L344.9 315.8L346.1 314.1L347.1 311.3L346.2 310.4L346.4 308.0L346.8 306.6L346.5 303.7M250.3 151.3L254.6 151.7L258.2 152.2L260.3 151.3L264.6 151.0L267.5 150.7L270.3 150.5L273.2 151.3L276.0 151.6L280.3 151.6L284.6 152.3L288.9 153.2L294.6 153.5L297.4 152.7L300.3 152.3L303.1 153.6L307.4 154.0L311.7 153.7L314.5 153.2L316.0 151.6L317.1 148.0L320.2 148.5L322.4 151.5L325.2 152.5L328.8 153.0L330.2 151.0L334.5 151.7L335.5 153.3M340.1 162.9L340.2 161.6L344.5 161.7L348.1 163.0L349.9 163.4L352.2 163.7L352.3 166.4L354.5 167.0L355.2 167.4L356.9 166.7L359.3 164.6L360.6 166.3L363.3 168.9L364.0 170.7L366.6 171.9L369.6 172.9L371.6 174.1L372.0 176.1" fill="none" stroke="#000" stroke-width="2" stroke-linejoin="round"/>
<path d="M320.1 184.0L323.8 182.1L325.5 181.0L328.1 181.1L330.5 182.3L330.8 184.3L328.1 184.3L325.4 183.1L322.4 184.1L320.1 184.0ZM326.2 190.7L327.1 187.4L327.4 185.3L329.5 185.1L330.2 187.1L328.4 189.3L327.7 191.1L326.2 190.7ZM330.8 185.3L335.5 186.0L337.1 187.0L334.9 188.6L333.8 189.3L332.4 187.8L332.7 186.4L330.8 185.3ZM332.5 191.0L335.9 189.8L338.8 189.4L338.5 190.3L335.1 191.4L332.5 191.0ZM337.7 188.8L341.6 187.8L342.8 188.4L339.5 188.8L337.7 188.8ZM310.3 173.9L312.4 174.3L314.1 177.1L313.1 178.7L312.4 176.4L310.3 173.9ZM284.6 163.3L289.6 161.2L295.3 161.0L292.4 162.2L287.4 163.6L284.6 163.3ZM273.2 157.2L278.9 155.3L283.2 155.7L281.0 157.4L276.0 158.0L273.2 157.2ZM292.4 166.7L296.7 165.9L297.0 166.3L292.9 167.2ZM305.0 170.0L306.0 167.9L306.3 169.3ZM518.4 186.8L519.4 185.6L521.7 184.4L524.5 183.6L527.1 183.8L527.3 186.0L524.5 187.1L524.1 187.8L525.7 189.6L527.0 190.7L528.5 192.4L527.1 194.3L528.0 197.3L525.4 198.3L523.1 197.3L521.4 196.1L522.1 193.3L522.7 192.7L520.8 191.0L519.3 189.3L519.0 187.8L518.4 186.8ZM535.0 185.7L537.1 184.6L539.0 185.0L538.5 187.4L536.4 188.6L535.0 187.1L535.0 185.7ZM556.4 184.1L559.9 184.3L564.2 184.3L562.8 185.1L558.5 184.8L556.4 184.1ZM599.6 177.0L602.0 175.6L604.9 174.3L607.3 171.9L608.1 171.1L607.4 172.9L605.6 175.0L602.7 176.4L600.6 177.3L599.6 177.0ZM494.3 163.9L496.2 162.9L498.4 163.2L498.0 164.3L495.7 165.2L494.3 163.9ZM500.7 161.3L502.9 161.0L503.3 163.3L501.7 163.4L500.7 161.3ZM496.6 252.1L497.2 250.2L499.3 250.2L500.1 251.1L500.1 252.1L498.6 254.2L496.9 253.5L496.6 252.1ZM493.0 255.5L495.2 259.6L496.0 262.9L495.3 263.0L493.7 259.9L493.0 255.5ZM500.0 264.2L500.9 266.3L501.0 269.9L501.7 271.3L500.7 269.5L500.0 264.2ZM470.8 232.1L472.2 231.4L472.6 232.2L471.5 232.6ZM351.8 272.5L353.1 273.7L353.5 273.3L352.2 272.3ZM450.8 238.8L451.9 240.9L452.1 238.5Z" fill="#0000ff" stroke="#000" stroke-width="1"/>
<path d="M315.7 182.7L316.3 184.0L317.4 184.4L318.2 186.0L318.5 186.4L319.7 187.4L320.7 188.1L320.5 189.4L321.5 190.7L320.7 191.9L321.1 193.0L321.4 194.7L322.8 195.4L323.4 196.2L324.1 197.8L323.0 199.5L323.0 200.5L322.5 201.2L321.7 203.0L321.4 204.6L321.0 206.0L321.8 207.8L323.6 209.0L324.1 209.0M292.4 185.1L293.6 184.0L293.9 182.4L294.6 182.9L296.0 181.9L297.0 182.1L298.8 182.4L299.8 182.1L301.2 182.7L301.9 182.5L303.8 182.1L305.4 182.7L306.2 182.9L307.7 183.4L307.8 185.0L308.5 185.7L308.3 187.3L309.0 187.7L310.4 187.9L311.8 189.3L312.5 189.6L314.2 191.2L314.5 191.8L315.1 192.9L316.0 194.7L316.9 195.0L318.2 195.0L320.2 195.5L321.9 195.3L322.8 195.3M337.4 193.0L336.6 194.3L334.9 195.1L333.1 195.4L332.1 195.0L330.5 194.8L329.4 195.7L328.1 196.5L327.3 196.4L325.7 197.4L324.2 197.8M300.3 195.0L301.7 195.2L302.6 195.6L304.6 196.3L306.0 195.6L307.5 196.4L308.2 195.8L309.5 196.0L310.5 196.6L312.7 197.1L313.1 198.5L313.8 198.6L315.3 199.8L316.0 200.3L317.5 199.7L318.8 200.4L319.6 201.4L321.5 202.3M304.6 201.4L305.9 201.0L307.5 201.2L308.1 201.8L309.5 201.4L311.0 202.0L313.0 202.6L313.4 202.6L315.3 202.4L316.1 203.4L317.7 204.4L318.8 205.4L319.0 205.8L320.7 206.4M331.8 199.4L330.5 199.9L330.1 200.4L328.4 201.3L327.1 200.8L325.8 200.7L326.0 199.8L325.7 197.7M299.3 196.8L299.7 197.8L299.7 199.0L299.1 200.7L299.0 202.2L298.7 203.4L299.3 205.0L299.5 206.4L300.5 207.1L301.4 208.1L302.4 208.4L303.2 208.7L305.3 208.1L307.4 208.5L307.6 209.7L308.2 210.0L309.5 211.4L310.8 212.6L311.4 213.1L312.8 213.7M300.3 193.6L298.9 194.4L298.2 193.7L296.5 194.7L295.3 195.1L294.0 196.6L293.9 197.1L292.6 198.4L291.7 199.1L290.7 199.6L288.9 199.3L288.0 201.0L287.3 201.9L287.9 204.0L287.7 205.3M285.3 178.6L284.3 180.1L283.2 180.7L282.1 182.6L281.0 183.3L280.3 184.7L278.9 184.5L277.4 185.6L276.5 184.9L274.6 184.7M293.6 187.8L292.0 188.7L291.0 189.1L289.4 188.9L288.7 189.1L287.4 189.6L285.9 189.1L284.7 187.8L285.1 186.1L285.1 185.2L284.6 184.4L283.6 184.3L281.7 184.7M258.9 164.3L257.7 163.6L256.9 163.5L255.6 162.4L255.3 161.4L254.0 160.5L253.8 160.1L252.7 158.7L251.1 158.6L250.6 158.3L248.6 158.0L247.5 157.6L246.8 156.7L245.7 155.8L244.8 156.0L243.2 155.6L242.3 155.4L240.4 155.7L240.3 155.7L239.0 156.3L237.5 156.4L235.8 156.4L234.7 156.6L234.3 157.4L232.2 157.0L231.1 157.9L230.1 158.6L228.1 158.9L227.9 158.3L226.1 159.0L224.4 159.3L224.3 160.1L222.5 161.0L221.2 161.0L219.8 161.7L219.7 160.9L218.0 160.6L216.8 161.2M284.6 163.6L283.4 163.0L282.7 163.7L280.8 163.4L279.7 162.9L278.9 162.9L277.7 162.3L276.6 160.9L276.0 160.8L275.3 160.0L274.5 158.8L273.3 158.1L272.5 157.9L271.5 157.1L270.6 157.1L269.6 155.7L268.3 155.6L266.6 154.2L266.0 154.0L264.3 153.7L263.8 153.3L262.0 153.1L261.0 152.4L259.6 152.5M274.6 170.7L275.2 170.6L276.6 170.9L278.4 170.5L279.2 170.2L280.3 170.4L282.0 170.4L282.8 170.1L283.9 170.0L284.8 169.0L285.6 168.5L286.5 167.3L287.4 167.2L289.1 166.4L290.9 167.0L291.7 166.4L292.4 164.3L291.1 163.4L289.6 163.6M288.1 177.1L289.8 177.6L290.2 177.2L291.3 177.5L293.1 177.1L294.0 176.4L296.4 175.7L297.4 175.7L298.4 175.1L300.5 175.5L301.7 174.7L303.6 173.8L304.2 173.6L306.0 173.9L307.2 174.2L309.3 174.0L310.0 174.7M312.0 173.7L312.5 172.7L313.8 171.4L315.3 170.9L316.7 170.0L317.5 169.9L319.1 169.3M296.7 171.0L298.3 171.7L299.3 171.3L299.9 171.5L302.0 171.3L303.1 171.4L303.8 170.5L306.0 170.1L306.4 170.7L308.1 170.0L308.8 169.3L310.3 169.8L311.8 168.4L313.1 168.6L314.9 168.3L315.3 166.8L317.1 166.7M342.4 187.6L343.9 186.5L345.2 186.0L346.6 185.6L347.2 185.5L348.8 184.3L350.1 183.9L350.9 183.3L352.3 182.1M281.7 175.0L279.9 174.3L279.4 174.3L277.4 174.0L276.7 174.3L276.3 175.0L276.9 176.9L277.0 177.9L277.4 179.3L275.7 180.6M297.4 158.6L298.6 157.9L299.4 158.8L300.9 158.5L301.5 158.5L303.1 157.9L303.7 158.0L305.2 157.6L306.9 157.3L307.7 157.1L308.8 156.4L309.8 156.8L310.8 156.5L312.6 155.5L313.0 155.3L314.5 155.0M346.6 256.9L348.6 257.0L349.5 256.1L351.3 256.4L352.3 256.6L353.4 255.3L354.5 254.9L355.8 254.9L357.3 254.9L358.8 254.5L359.5 255.0L360.9 255.6L362.4 255.4L363.2 255.6L364.5 255.3L365.3 255.8L367.3 255.3L368.0 254.6L369.4 255.0L370.9 254.2L371.8 253.5L373.7 253.8L375.6 253.1L376.6 252.8L377.4 252.4L378.7 251.3L380.2 250.6M348.8 269.9L348.0 268.9L347.3 267.8L346.9 266.1L346.6 265.6L346.5 264.1L345.2 262.8L345.1 261.0L345.4 260.6L345.9 259.2L345.6 258.2L346.6 256.9M340.9 263.5L340.7 262.3L340.1 261.1L340.2 259.9L340.3 259.0L341.6 257.5L342.5 257.5L344.5 257.2L346.6 256.9M351.6 248.5L352.2 249.1L353.8 248.8L355.2 248.5L356.0 249.5L356.6 250.6L358.4 250.8L359.5 251.3L360.9 251.6L361.7 253.0L363.0 253.5L365.1 254.8L365.9 255.2M343.1 248.5L344.4 248.9L344.5 249.2L346.6 250.0L347.4 250.4L348.1 251.3L349.0 251.8L350.9 251.9L352.3 252.8L353.9 252.6L354.8 252.7L355.9 253.5L357.6 253.8L358.8 254.6M348.8 265.6L349.9 265.7L351.2 264.8L353.1 264.2L354.0 263.0L355.9 262.8L356.9 261.9L357.9 261.1L358.6 261.3L359.5 259.9L360.8 258.9L361.3 258.4L362.4 258.3L363.0 257.1L363.8 255.6M358.1 266.3L359.1 265.7L358.9 264.7L360.2 263.5L361.4 263.1L362.4 261.4L363.0 261.3L363.8 260.5L364.4 259.2L365.2 258.5L366.2 257.4L366.8 257.1L367.3 255.6M368.8 267.8L368.5 266.6L369.5 265.2L369.5 263.5L370.0 262.9L369.9 261.4L370.9 259.9L371.5 258.5L372.0 257.9L372.2 256.5L372.6 255.8L373.0 254.2M375.9 269.2L376.4 268.4L376.5 266.2L375.9 265.6L375.5 264.2L376.8 262.2L376.6 261.3L376.3 260.2L375.8 257.9L375.9 257.1L375.9 255.7L376.2 254.5L377.0 253.2M382.3 272.7L383.1 271.8L383.2 269.9L383.0 268.5L383.4 267.1L382.4 265.7L382.6 265.7L381.8 263.9L382.3 262.8L382.0 261.6L381.4 260.1L381.6 258.5L381.2 256.8L380.6 255.7L381.5 255.2L380.9 253.5M375.9 275.6L377.1 274.3L377.8 273.7L377.9 272.5L378.7 271.3L379.6 269.8L379.0 268.6L379.5 267.0L379.5 266.4L379.7 264.1L380.2 262.7L380.9 262.0L381.0 261.2L381.8 260.1L382.3 258.5M385.9 279.2L386.2 277.5L387.4 276.6L387.6 275.4L388.0 274.9L389.1 273.4L389.2 272.6L389.4 270.6L390.2 269.2L390.7 267.6L390.9 266.3L391.5 266.1L393.3 265.2L393.7 263.9L395.1 264.4L396.6 264.5L397.7 264.7L399.4 265.6M383.7 273.5L383.6 274.8L382.5 275.9L381.7 276.8L380.9 277.7L379.5 278.9L378.6 278.6L378.0 279.9L377.3 281.2L377.1 281.1L375.9 282.7L375.3 284.3L374.4 285.4L374.1 286.5L373.7 287.0L372.5 288.2L371.9 288.3L370.9 289.7L369.8 289.9L368.0 289.9L367.5 291.0L366.9 292.5L366.6 293.4L365.3 295.2L365.2 296.3L366.5 297.8L366.6 298.4L368.0 299.1M369.5 273.5L369.3 274.7L369.6 276.7L369.0 277.7L368.8 279.5L369.0 280.7L369.2 282.0L369.8 282.8L369.8 285.0L368.8 285.3L369.5 286.7L369.3 288.2L368.0 289.6M380.2 289.9L378.9 290.5L377.2 289.3L375.9 289.9L375.2 290.1L374.4 291.6L372.2 292.5L371.6 292.7L370.9 293.4L370.7 294.3L369.5 295.6L369.1 296.7L368.3 298.4M359.5 246.3L358.2 245.8L356.5 245.0L355.9 244.9L355.2 243.0L355.2 242.1L356.5 241.2L357.3 239.8L358.1 239.9L359.9 239.1L360.9 239.1L363.0 238.5L364.8 238.4M343.4 247.8L343.2 246.9L344.2 244.8L344.5 243.5L344.7 242.4L345.4 241.3L345.6 239.2L345.1 237.8L345.7 236.2L344.8 234.9M498.6 249.9L498.7 248.5L497.9 247.1L497.1 246.2L497.5 244.4L496.4 243.5L495.7 242.9L495.5 240.9L495.0 239.9L495.9 239.3L497.1 237.5L497.9 237.1L497.5 236.5L497.7 234.8L497.9 233.5L498.1 232.6L498.2 230.6L497.9 230.0L497.9 228.4L499.2 227.7L499.7 226.9L500.0 225.7L498.9 224.3L498.6 223.5L497.2 221.9L496.4 221.4L496.8 220.5L496.8 219.0L497.7 217.1L497.9 216.4L497.6 215.1L498.3 213.5L497.3 211.7L496.6 211.7L496.4 210.0L495.7 208.9L496.0 207.5L495.7 205.7M504.7 234.1L503.9 233.7L502.1 234.2L500.7 232.8L500.3 231.0L499.8 230.8L498.2 228.9L497.9 228.4M495.7 245.6L495.6 245.0L495.0 243.4L494.3 242.1L493.7 241.1L492.9 240.3L492.9 238.5L493.8 238.2L495.8 238.0L496.4 237.1M491.4 262.8L491.5 261.9L490.2 259.8L490.3 259.1L489.3 257.8L488.3 256.4L488.2 254.4L487.9 253.5L487.3 252.5L488.1 251.7L487.5 249.9L486.1 249.0L485.0 248.9L483.9 249.1L482.2 248.1L480.1 248.8L479.3 248.5L479.1 250.0L478.2 250.4L477.2 252.1L476.3 253.3L476.3 253.8L475.0 254.9L473.9 255.6L473.3 256.8L471.8 257.9L470.8 258.5L469.0 259.2M490.7 244.2L488.8 243.9L488.8 244.0L487.6 244.8L485.7 244.2L484.2 244.3L483.9 243.8L482.2 244.5L480.6 245.1L479.2 245.1L477.9 245.4L478.2 246.9L477.8 247.3L477.6 248.4L476.9 249.9M482.9 267.0L482.7 266.0L481.9 264.7L482.2 263.8L481.5 262.0L480.8 260.5L480.7 260.2L480.7 258.5L479.2 257.7L478.6 256.4L477.9 256.3L477.0 255.1L475.0 255.2M436.5 237.1L436.9 236.7L437.4 235.2L438.7 234.2L440.0 233.4L440.8 232.4L441.6 231.7L443.3 230.5L444.4 229.9L445.8 228.3L446.5 227.5L447.9 227.9L449.3 227.5L450.1 227.1L451.6 228.0L452.9 228.5L453.9 229.8L454.0 230.7L455.1 231.4L455.3 232.3L456.5 234.2L457.3 235.4L457.8 235.5L458.6 237.1L459.7 238.6L460.8 239.5L461.2 240.9L460.8 242.8L460.3 244.2M470.8 237.8L470.0 237.9L467.9 237.1L466.4 237.4L465.1 238.5L464.1 238.5L462.2 239.5L461.1 239.5M485.7 267.0L484.4 268.3L483.8 269.3L483.6 269.9L484.7 271.0L485.1 272.4L485.0 273.5L486.4 274.4L486.6 274.8L487.9 276.0L489.6 275.9L490.4 274.6L491.4 274.2L492.3 274.0L493.4 273.9L495.0 273.2L495.9 273.1L497.6 273.7L498.6 273.5L499.4 274.4L501.4 274.9L502.6 276.6L503.3 277.5M492.9 292.7L491.2 293.3L490.4 293.1L488.6 293.4L486.6 293.5L485.7 292.4L484.4 292.0L483.5 292.2L482.2 291.3L480.3 290.9L479.3 291.0L477.8 291.4L476.2 290.7L475.0 291.4M489.3 286.3L489.8 285.3L490.5 284.6L491.9 283.0L492.2 282.7L493.2 283.0L494.8 282.9L495.7 282.5L496.2 283.1L497.9 284.9L499.3 286.6M435.8 233.5L435.5 231.9L435.2 230.6L435.1 229.9L433.0 229.2L432.0 228.9L430.4 227.7L430.1 227.1L428.1 227.8M498.6 169.3L499.9 168.5L500.4 168.7L502.1 168.6L503.2 168.5L504.1 168.8L505.7 168.4L507.2 167.8L508.6 168.3L509.3 168.9L511.3 168.9L512.1 170.1L513.2 170.7L515.0 170.3L517.0 169.8L517.8 171.1L519.3 170.7L521.4 171.4L521.1 173.6L522.1 174.7L521.2 175.7L519.3 176.4L517.8 177.9L517.6 178.8L516.4 180.0L517.9 181.6L518.6 182.4L519.6 183.7L520.0 184.3L520.7 185.3M526.4 165.7L527.3 165.8L529.0 167.2L529.2 167.5L530.7 167.9L530.0 169.1L529.3 170.0L527.6 170.7L527.2 170.3L525.7 171.1L523.9 171.3L523.6 172.1L522.1 171.7M505.7 173.9L506.9 175.4L507.3 176.0L507.9 177.1L509.4 178.1L510.7 178.6L511.7 179.4L512.8 180.4L511.7 181.1L510.7 182.1L509.6 182.7L508.6 183.1M498.6 171.4L497.0 172.2L496.7 173.7L495.7 174.3L495.8 175.1L495.2 177.1L495.0 177.9L495.7 180.0L496.9 180.7L497.6 180.6L499.3 180.7L499.8 181.6L501.4 182.4L500.4 183.7L499.3 183.8L497.2 184.1M463.6 182.1L465.2 182.3L466.8 181.0L467.9 181.0L469.3 181.8L470.8 181.6L472.2 181.7L474.2 182.3L475.5 181.4L476.5 182.1L478.6 182.8L478.8 183.7L478.3 185.3L479.1 185.4L480.7 186.7L482.2 186.3L483.6 187.0L485.6 188.1L486.5 188.3L488.3 187.4L489.3 187.7L489.8 187.1L491.4 186.1L493.6 186.0M465.1 182.8L462.9 182.7L462.9 180.7L463.6 179.3L462.9 179.0L461.5 177.9L460.1 176.6L457.9 176.4M478.6 179.6L480.3 179.4L481.4 179.1L482.2 178.1L481.8 176.4L481.5 175.7L479.7 175.4L478.6 174.6L478.3 173.1M472.9 178.6L471.8 178.1L470.8 177.1L469.1 176.8L468.6 175.7L466.8 174.4L465.8 174.3L464.1 173.7M517.8 164.3L517.0 163.1L515.7 162.9L514.2 161.8L513.6 161.4L512.1 160.7L511.8 160.2L510.7 159.3L509.3 158.4M533.5 162.9L533.8 161.6L533.2 160.0L532.8 159.3L531.2 158.1L530.8 158.4L530.0 158.0L528.5 157.2L528.1 156.0L526.4 155.0L527.3 153.8L528.5 153.3M573.5 175.7L572.2 175.4L571.4 174.9L569.9 173.6L570.1 172.7L569.6 170.6L569.2 170.0L568.4 168.8L567.1 168.7L566.3 167.2L564.7 166.8L564.4 165.6L563.2 164.2L562.1 163.9L560.5 164.2L560.0 164.4L558.0 163.9L557.0 163.8L556.4 163.6L554.9 163.3L554.2 163.7L553.1 163.2L551.3 162.5L550.7 162.9L548.9 162.8L547.3 161.7L546.4 161.4L546.1 159.7L544.9 158.6L545.4 156.4L546.4 155.6L547.5 155.9L548.3 155.5L550.3 155.9L551.7 155.8L552.8 155.7M576.3 182.4L575.6 182.0L573.5 181.8L572.0 182.2L571.3 182.1L570.2 181.8L568.8 180.3L567.7 179.9L567.9 179.7L566.3 178.6L565.0 177.9L564.4 177.2L563.8 177.3L562.1 176.5L561.4 175.7L559.7 174.3L559.6 173.7L557.5 172.6L557.1 172.1L556.5 171.5L555.6 170.8L554.0 170.5L553.5 169.3L552.0 169.2L550.9 167.5L549.9 167.2L549.8 165.3L549.2 164.3L550.7 162.9M541.4 176.4L542.2 175.7L542.5 174.4L543.4 173.2L543.5 172.1L543.9 171.1L545.5 170.7L546.1 170.1L546.4 168.6L547.1 168.4L548.5 167.6M589.9 177.1L589.0 176.4L587.8 177.1L586.3 176.7L585.6 176.1L583.6 174.6L582.8 174.3L583.3 172.4L583.5 171.0L584.0 168.8L584.2 167.9L583.7 166.2L583.5 165.0L582.8 164.3L581.5 163.3L580.5 163.1L579.2 162.2L578.1 160.8L577.2 159.3L577.0 158.6L576.1 158.0L575.6 155.7L575.6 155.0L575.2 154.3L574.5 153.2L574.9 151.5L574.1 150.7L573.0 150.1L571.1 149.7L570.6 149.3L569.0 148.0L567.8 147.5M600.6 176.4L600.5 174.9L599.0 173.8L599.5 172.6L598.4 172.1L597.0 171.5L596.0 170.7L595.6 169.0L594.8 168.3L593.3 168.0L592.0 168.4L590.6 167.9L588.9 168.3L588.6 168.1L587.0 167.6L585.4 167.7L584.2 167.7M605.6 167.2L603.9 166.6L603.2 165.1L602.2 164.7L601.3 163.6L600.7 163.2L599.4 162.7L597.1 162.6L596.5 161.8L595.2 161.5L594.2 161.4L592.8 161.3L591.8 161.0L589.9 160.0L588.9 160.2L586.4 159.9L585.6 159.3L584.8 158.2L582.7 158.3L582.2 157.4L580.6 157.3L579.9 156.7L578.3 156.3L577.0 156.7M603.4 173.9L603.6 172.2L604.1 172.1L604.9 170.7L606.1 170.0L606.3 169.1L607.7 168.6L608.3 167.7L610.1 167.1L611.1 167.2L612.0 166.4L613.1 165.9L614.9 165.5L615.6 164.3L617.3 164.9L617.8 164.6L619.9 164.3L620.5 163.8L622.0 164.3L622.9 164.2L624.6 163.7L626.2 163.7L626.9 163.9L628.4 163.6L629.1 162.7L630.9 162.4L631.4 162.4L633.3 161.8L634.1 161.4L634.3 160.5L636.0 159.9L636.3 158.6L635.1 157.8L635.1 156.0L633.7 155.8L633.4 154.3L632.6 153.3L632.5 152.4L632.0 150.7L632.0 149.9L633.1 148.1L632.7 147.2M599.9 158.6L600.6 158.2L601.8 159.1L604.2 158.8L605.1 159.5L605.6 159.4L606.7 160.2L608.4 160.0L609.5 160.7L610.7 159.8L612.4 160.2L613.5 160.3L614.1 160.2L615.6 160.1L617.0 160.4L618.8 160.5L619.7 160.0L620.8 160.6L622.5 159.7L623.9 159.8L624.8 160.0L626.6 159.7L627.6 159.9L628.5 159.6L629.6 159.8L631.7 159.4L632.7 159.6M630.5 168.6L631.9 168.7L632.9 168.2L634.4 168.1L635.7 167.2L636.3 167.4L638.2 167.5L639.1 167.2L640.3 166.4L641.0 166.7L642.4 166.3L644.1 166.4L644.4 165.2L643.1 164.0L643.4 162.9L642.2 162.3L640.8 162.1L640.0 162.0L638.1 161.2L637.0 161.4L636.3 160.7M659.8 161.4L660.6 160.9L661.9 160.5L662.7 160.0L664.2 160.9L665.5 160.0L666.3 159.3L667.0 158.5L668.6 157.3L669.8 156.7L670.7 156.3L671.6 155.0L673.6 154.6L674.1 153.9L674.9 153.1L676.3 153.4L677.2 152.3L679.2 152.1L680.0 151.8L681.2 151.5M654.1 159.3L654.6 158.0L655.7 157.7L657.2 156.8L657.7 156.4L658.7 155.8L659.9 155.1L661.3 154.0L661.9 152.9L663.3 152.2L663.7 151.3L664.8 150.0M642.7 155.0L643.3 154.2L643.5 152.4L644.8 151.5L645.2 150.4L646.2 148.6M616.3 179.3L617.2 178.6L618.5 177.7L619.9 177.3L621.4 176.0L622.0 175.7L622.6 175.0L624.9 174.7L625.6 174.7L626.4 174.5L628.3 175.7L628.8 174.7L630.9 175.8L632.0 175.7L631.9 177.4L632.6 177.7L633.4 179.3L634.3 180.3L636.1 180.0L636.2 180.4L637.7 181.4L639.2 181.2L640.7 181.1L642.0 181.7L644.1 181.4L645.2 179.6L645.5 178.6L646.1 177.4L647.5 176.4L648.4 175.7L649.5 175.0L650.8 175.5L651.9 175.0M642.0 186.4L642.0 185.5L642.7 183.6L643.4 183.2L644.1 181.7M632.0 189.3L631.2 188.8L630.5 187.4L629.8 186.4L631.0 185.2L632.0 185.0L632.8 184.3L634.8 184.4L636.3 184.3L637.5 183.4L638.2 183.5L640.1 183.4L640.5 182.4M588.5 200.7L589.9 200.2L590.4 200.0L592.4 199.3L593.5 199.5L594.7 198.6L596.3 199.0L597.7 199.1L599.2 199.3L600.6 199.1L601.3 197.7L602.0 197.1L602.5 195.2L603.4 194.3L604.3 193.4L605.6 192.4L607.0 192.2L608.1 192.8L609.9 192.8L609.8 194.2L609.9 195.7L610.0 197.1L609.8 198.2L609.1 199.3L609.1 201.3L610.3 201.5L611.5 200.5L612.7 201.0L614.1 200.4L614.9 200.8L616.3 200.4L617.1 199.4L618.4 198.5L619.9 197.3L621.1 196.8M581.3 202.8L582.0 202.7L584.4 203.1L584.6 203.5L585.8 203.8L587.7 203.5L589.5 203.9L590.3 204.1L591.3 205.0L592.4 206.1L592.5 207.3L593.2 208.6L593.5 210.0L594.4 211.4L594.9 212.1L596.5 212.5L597.7 212.8L599.0 212.2L599.2 211.2L600.6 209.5L602.4 208.5L603.4 208.5L605.1 207.8L606.3 206.7L608.1 206.3L609.1 206.7L610.3 207.4L611.3 207.5L612.5 207.4L614.1 207.1L615.3 207.7L617.0 208.1L618.2 207.0L619.1 207.1L619.6 205.9L621.3 205.0L621.9 205.6L624.0 205.2L624.8 205.4M599.9 215.2L601.8 215.7L602.1 216.1L604.2 216.4L605.5 216.0L607.1 216.8L607.7 217.0L609.0 217.7L610.6 217.4L612.2 218.2L613.4 218.2M586.3 202.8L586.9 204.3L587.8 204.4L589.0 204.9L590.6 206.4L590.8 207.1L591.6 209.4L592.7 210.0L593.3 211.7L593.5 213.2L593.5 214.2L593.4 215.3L594.7 216.6L594.9 218.5L595.9 220.5L596.3 221.4L596.9 222.3L597.2 223.2L597.7 224.9L598.8 224.9L600.6 226.1L601.3 227.8L600.9 228.0L602.0 229.2L602.6 231.0L602.1 231.3L602.4 232.8L602.4 234.9L603.4 236.6M584.9 205.7L585.5 205.8L587.0 207.4L587.9 207.4L589.1 207.8L589.8 208.3L591.3 209.2L591.6 210.5L592.4 212.2L592.7 213.5L592.5 214.4L593.2 215.7L592.6 217.5L592.5 218.5L591.5 219.3L592.0 221.0L591.3 222.8L591.0 224.1L591.6 225.2L590.9 227.1M590.6 211.4L590.5 212.8L590.0 213.3L589.9 215.0L589.0 216.1L588.5 217.8L587.9 218.4L587.0 219.9L587.4 221.4L586.4 222.6L587.0 223.5L586.9 224.6L587.4 225.4L587.0 227.1M568.5 207.1L569.1 207.1L571.4 207.5L572.3 208.7L573.5 208.8L575.2 208.4L576.2 208.3L577.0 209.4L578.5 208.8L580.0 208.5L580.9 208.6L582.8 209.0L584.7 209.4L585.7 208.9L587.0 209.2L587.7 211.0L586.3 212.3L584.9 212.8L583.4 212.6L582.9 213.2L581.3 213.2L579.6 214.7L578.9 215.5L579.2 217.1L580.6 218.2M564.2 207.1L563.1 208.5L564.0 210.3L564.2 211.4L565.3 211.8L566.6 213.3L567.1 214.2L568.5 214.3L569.9 214.5L570.7 214.8L571.9 214.1L573.5 214.2L574.7 214.5L576.3 215.0L577.8 216.4L579.2 217.8L580.3 218.5M562.1 207.1L561.8 208.4L561.8 209.8L562.2 211.7L563.5 212.4L565.2 213.1L565.6 213.5L566.4 213.8L568.2 214.4M567.1 205.7L566.5 205.4L565.3 204.5L564.2 203.5L563.3 203.4L561.8 201.5L562.0 201.4L560.6 200.7L559.3 200.6L557.8 199.8L557.2 200.7L556.5 201.0L554.9 202.1L554.6 202.6L553.5 204.3L552.7 206.3L552.5 207.1L551.2 208.9L550.7 210.0L549.3 212.0L548.9 212.8L548.5 215.0L547.8 216.4M567.1 206.7L565.9 205.9L564.6 205.4L563.5 205.7L562.6 206.5L560.6 206.1L559.3 206.5L557.8 206.7L555.9 206.8L554.9 208.1L553.6 208.5L552.8 209.0M556.8 222.2L558.3 222.0L559.6 223.0L560.7 223.6L562.1 223.5L563.9 223.0L564.1 224.3L565.6 223.8L566.4 224.9L567.8 225.7L568.8 226.8M556.6 224.9L558.1 225.5L558.5 227.1L560.4 227.8L561.7 227.1L562.8 227.5L564.2 227.0L564.6 228.2L566.3 227.8M567.8 218.2L566.7 217.8L565.1 218.7L563.5 218.5L562.2 218.3L560.1 219.0L559.2 219.0L557.7 219.7L556.8 219.9L555.6 219.7M508.6 196.0L509.7 197.4L511.4 197.8L512.7 199.2L513.6 199.3L514.2 200.8L513.7 201.1L514.7 202.8L515.6 203.3L517.1 205.0L518.7 205.2L519.3 206.4L520.4 207.8M507.9 194.3L506.7 195.4L506.4 196.4L506.0 198.5L506.8 199.1L508.6 200.7L510.4 200.9L511.4 201.4L512.1 202.5L513.3 203.2L513.7 204.5L514.3 205.0L515.3 206.2L517.1 206.4L519.3 206.7M556.4 197.8L555.2 197.5L553.1 196.9L552.1 197.1L550.4 197.4L548.8 197.7L547.8 197.5L547.0 197.1L545.0 196.3L544.2 195.7L542.8 194.5L541.4 193.6L540.7 193.6L539.1 192.1L539.0 192.0L537.8 190.7L537.1 189.9L536.4 188.6M554.9 192.1L553.2 192.6L552.1 192.4L550.5 192.0L549.2 192.8L549.2 191.3L547.3 191.2L547.1 190.0L546.9 189.1L545.7 187.1L544.8 186.8L543.9 186.5L542.1 185.3L540.9 185.2L539.0 184.7M535.7 172.9L535.0 174.7L535.6 175.2L535.0 176.4L533.4 176.7L533.1 177.3L531.4 177.1L530.3 177.7L528.6 176.9L527.8 177.3L526.7 178.0L525.0 177.9L524.4 179.6L525.1 180.2L525.0 181.4L525.4 183.6M560.6 194.3L561.5 194.2L563.2 193.0L564.2 192.8L566.0 192.5L566.7 192.9L568.5 192.1L570.2 192.2L571.6 192.7L572.8 192.1L574.4 192.6L575.6 192.1L576.3 192.8L577.8 194.3M590.6 181.4L591.8 181.8L593.6 180.9L594.8 180.9L595.6 180.3L596.6 179.8L598.3 180.5L599.9 180.0L600.9 179.4L601.6 179.0L603.4 178.6L603.4 176.4M662.6 302.7L660.5 302.0L659.0 301.8L657.7 301.7L655.7 300.5L654.8 299.9L652.7 299.4L651.2 299.4L650.5 301.3M666.2 289.9L665.5 289.9L663.8 290.7L662.9 291.2L661.9 292.0L660.4 292.2L660.6 293.4L659.1 294.2L658.1 294.8L657.2 296.2L656.2 296.3L655.8 297.7L654.1 298.4L653.8 299.4M266.0 165.0L266.8 165.7L268.0 164.9L268.9 166.0L270.9 166.0L271.7 165.7L272.3 165.1L274.2 164.7L275.3 164.3L277.0 163.9L278.2 162.4M251.8 154.3L250.8 153.9L248.3 154.5L247.5 153.9L246.3 154.5L244.8 155.6L243.9 155.7M248.9 160.7L247.6 160.8L246.7 159.4L244.9 159.4L244.5 159.4L243.4 158.0L241.8 158.2L240.4 158.2L239.8 157.9L238.1 157.3L237.4 158.0L235.5 157.9L234.6 157.6M236.1 154.3L234.8 154.1L234.2 154.6L233.1 155.1L230.9 156.0L230.4 156.4L229.8 156.5L227.7 157.7L226.8 158.2M300.3 160.7L301.6 160.7L302.7 160.8L303.8 160.0L304.4 160.2L306.8 159.2L307.4 159.3L309.1 159.0L310.1 158.6L311.3 159.6L312.2 159.3L313.1 158.9M304.6 165.0L306.0 164.7L307.0 163.3L308.3 163.5L309.3 162.7L311.1 162.3L311.7 161.4L312.6 160.5L313.6 159.9L315.3 159.3M283.2 175.0L284.9 174.4L285.1 173.9L286.6 173.7L287.2 173.2L288.9 172.1L289.3 171.2L290.3 170.0L290.7 169.4L291.2 168.0L292.4 167.2M293.9 187.1L295.5 186.5L296.4 185.9L297.2 185.3L298.8 185.0L299.9 184.4L301.1 184.0L301.8 183.7L303.1 182.8M301.7 192.8L302.5 192.7L303.8 192.4L304.5 192.6L306.7 192.6L307.4 192.1L308.9 192.2L310.0 191.7L311.7 192.4L312.9 191.9L314.5 192.1M313.4 184.3L312.9 183.6L313.7 182.0L313.1 180.7L313.1 178.9M338.8 182.8L339.4 183.7L341.1 184.0L342.4 185.0L343.0 185.6L345.3 185.2L345.9 185.7M306.7 202.8L307.5 203.4L309.0 203.3L310.6 203.4L311.7 204.3L312.8 205.2L313.4 205.8L313.8 207.1L314.9 208.2L315.3 209.2M277.0 192.8L277.7 194.0L277.7 195.7L277.4 196.4M323.1 178.6L324.9 178.9L326.1 178.9L327.3 178.0L328.2 177.4L329.5 177.9L330.9 177.5L332.4 176.5L333.4 176.7L334.5 176.1M257.5 157.9L258.1 156.7L259.2 155.8L259.6 154.3M348.1 263.5L348.8 262.5L349.7 261.9L351.1 260.3L351.6 259.9L352.5 259.3L353.0 258.7L353.9 257.7L355.2 257.1L356.1 256.8L357.4 255.7L357.6 254.6M343.1 250.6L344.5 250.8L345.7 252.2L346.0 251.8L346.4 253.5L348.1 253.5L349.6 254.0L351.5 254.1L352.3 254.9M364.5 244.9L364.5 245.5L364.5 247.3L364.5 248.5L364.2 249.8L363.3 250.7L363.0 252.1M365.9 272.0L364.6 270.7L364.0 270.6L362.2 270.1L361.6 269.2L360.5 268.2L359.8 266.8L358.8 266.3M355.2 272.7L356.2 271.5L355.8 270.1L356.9 269.2L356.6 267.8L357.4 266.3L358.1 265.6M358.8 280.6L359.4 281.5L361.5 281.6L362.0 283.2L363.0 283.5L364.7 283.9L365.7 284.1L367.0 285.5L367.2 286.3L368.8 286.7M385.9 264.9L386.5 263.8L386.6 263.0L387.8 261.3L388.0 259.7L388.7 259.2L389.6 258.9L390.0 257.0L390.6 256.3L391.6 255.6M351.6 306.3L352.1 306.8L354.4 306.7L355.3 307.5L356.2 307.4L357.3 307.7L358.5 308.0L360.2 308.0L361.6 309.1M371.6 270.6L371.6 269.6L370.8 268.8L371.5 267.7L370.5 266.5L370.9 264.9L370.4 263.3L370.1 262.1L369.5 261.3M350.2 269.2L350.7 269.1L352.7 268.0L353.7 267.2L354.5 266.3L355.5 266.3L357.3 265.6M487.2 260.6L486.6 259.0L487.2 258.5L486.9 257.3L486.4 255.6L486.9 254.9L486.9 253.1L486.6 252.3L486.2 251.8L486.5 249.9M475.8 268.5L475.6 266.9L474.1 265.8L474.0 265.5L472.9 264.2L470.8 263.9M475.8 269.2L476.4 269.7L476.7 270.7L476.8 272.5L477.9 273.8L477.9 274.1L478.6 275.6L479.8 275.9L480.8 277.3L482.2 277.9L483.6 278.2M510.7 239.9L512.2 241.1L512.6 242.2L513.4 242.8L514.3 243.5L514.9 245.2L515.2 245.5L516.4 247.1M508.6 243.5L509.1 244.8L509.6 245.8L510.4 247.1L511.6 247.7L512.1 248.5M504.3 229.2L502.8 228.0L501.6 227.7L501.5 226.9L500.0 225.5M487.2 239.2L488.5 238.3L490.4 238.7L491.4 237.8L492.4 237.4L493.7 236.9L495.0 237.4M478.6 237.8L477.2 236.7L476.5 237.1L475.3 236.7L474.3 235.6L473.7 234.5L472.6 232.8M447.2 234.9L448.7 235.5L449.0 236.7L450.1 237.1L450.7 238.6L451.5 239.9L451.5 240.6L452.4 242.4M434.4 232.8L433.0 232.2L431.5 231.7L430.0 231.2L429.0 231.3L428.0 231.4M469.3 252.1L467.2 251.3L465.1 251.8M492.9 288.4L491.5 289.2L489.9 289.9L488.6 289.9L487.2 290.1L486.5 291.1L485.7 292.0M457.2 186.4L456.0 185.1L455.6 184.0L455.1 182.8L453.4 183.5L452.2 183.1L450.8 183.5L449.4 182.9L448.6 183.1M458.6 182.4L456.9 182.0L455.8 181.4L454.9 180.6L452.9 180.4L451.8 180.0M462.9 184.3L462.2 184.0L460.1 185.0L459.3 185.0L458.3 186.4L458.1 188.6M462.2 186.4L462.8 186.2L464.8 186.6L465.8 186.4L467.3 186.2L469.0 186.4M445.8 189.3L447.2 190.1L448.6 190.4L449.4 190.7L450.6 191.7L451.1 191.4L452.6 192.6M448.6 192.8L447.5 192.9L445.2 194.1L444.4 193.8L442.7 194.4L441.7 194.3L440.8 194.3L439.0 195.1L438.4 195.4M485.0 180.0L486.5 180.8L488.0 180.6L489.0 181.4L490.0 181.4L491.0 181.9L492.0 183.5L493.7 183.2L494.3 184.3M498.6 170.7L497.1 171.4L496.7 170.7L494.4 171.2L493.3 170.5L492.3 170.4L491.4 171.0L490.5 171.3L489.2 170.6L488.0 169.8L486.5 170.0L485.7 169.3M477.2 179.6L475.8 179.2L475.0 177.9L474.7 177.2L473.8 176.2L472.3 175.7L472.0 174.0M503.6 175.7L504.4 174.1L504.7 173.4L505.0 172.1L505.7 171.9L507.4 172.1L509.3 172.6L510.0 172.1L511.5 172.2L512.6 170.6L513.6 170.4M534.2 174.3L532.5 173.3L531.4 172.4L530.6 171.4L528.5 170.7M548.5 177.9L549.3 177.1L549.4 175.9L550.5 175.0L551.4 173.6L551.6 172.6L552.6 170.5L552.8 169.3M572.8 160.7L571.2 160.6L570.4 159.8L569.8 159.5L567.8 158.3L566.4 158.3L565.6 157.9L564.5 156.5L563.8 155.6L562.8 155.0M562.8 159.3L562.1 157.9L562.4 157.0L562.1 155.7M577.0 151.5L577.0 149.8L575.8 149.2L575.8 148.1L575.6 146.5M594.2 150.7L594.8 150.5L596.2 149.5L597.7 149.8L598.7 148.9L599.9 148.8L601.3 147.9L602.7 146.5M608.4 153.6L609.0 153.9L611.3 152.7L611.3 152.5L613.6 152.4L613.6 152.2L615.2 152.3L616.5 152.2L618.1 151.1L618.9 150.5L619.8 150.7L620.9 150.3L621.2 149.6L621.8 148.0L623.7 147.8L624.1 146.7M598.4 163.6L596.8 163.3L596.4 162.8L594.4 162.9L594.0 162.9L592.1 163.5L591.5 163.2L589.9 162.9L588.5 162.8L587.3 162.4L586.0 163.5L585.2 162.7L584.4 162.6L582.8 162.9M615.6 173.6L615.6 171.6L614.6 170.7L614.1 169.3L613.0 168.1L612.7 166.4M622.7 172.1L622.9 171.5L623.2 170.3L623.1 168.1L622.7 168.2L623.4 166.4L623.7 164.4M632.7 172.1L633.3 174.0L634.1 175.0L634.2 176.9L634.1 177.1L633.4 178.9M688.3 157.2L689.9 157.4L690.5 157.2L692.0 157.6L693.0 157.6L694.7 157.3L696.2 158.2L696.9 157.9L697.9 158.0L699.5 158.2L700.3 158.7L701.8 158.3L703.3 158.3M549.9 202.1L549.4 202.2L548.1 202.6L547.1 203.7L545.8 205.0L544.2 205.0L543.0 205.3L541.1 205.8L540.0 206.4M513.6 191.0L515.6 191.4L516.6 192.0L517.8 192.1L518.7 192.2L519.4 193.6L521.3 193.8L522.1 194.3M568.5 219.9L569.4 220.1L571.3 220.7L572.4 220.9L573.6 221.3L574.9 221.7M588.5 213.5L588.1 215.1L587.0 216.8L587.0 217.8L587.5 219.9M597.0 216.4L598.5 217.0L598.4 217.3L599.9 218.5L600.5 219.8L601.8 220.3L602.7 220.7M593.5 224.2L593.7 225.4L593.6 226.5L594.2 227.8L593.9 229.0L594.8 230.7L594.9 231.4M612.7 204.3L614.0 204.7L615.5 203.5L617.0 203.8L618.5 203.3L620.2 203.8L621.3 203.1M604.2 203.5L605.9 203.4L605.9 203.4L607.4 204.4L609.3 204.0L609.9 204.3L611.3 205.4L612.4 206.2L612.7 206.6L614.1 207.1M629.1 179.3L628.3 180.3L628.3 181.9L628.4 182.8L629.4 183.9L630.3 184.6L630.5 185.7M621.3 189.3L623.2 189.4L624.7 189.3L625.6 190.0L625.5 190.9L626.3 192.4M597.7 183.6L598.5 182.3L599.9 181.2L600.6 180.7L601.2 180.0L602.7 179.0M605.6 182.1L607.1 181.7L608.2 183.0L609.3 183.0L610.4 182.2L611.0 182.2L612.7 182.8L614.1 182.9L614.6 182.3L616.6 181.9L616.8 182.3L618.4 181.4M557.8 202.8L556.2 203.5L555.6 205.0L554.2 206.0L553.5 207.1" fill="none" stroke="#0000ff" stroke-width="1.3" stroke-linejoin="round"/>
<path d="M228.6 221.8h2.1v1.7h-2.1ZM226.4 220.2h2.1v1.0h-2.1ZM223.4 218.7h1.1v1.0h-1.1ZM321.5 250.8h1.7v1.4h-1.7ZM410.1 195.2h2.9v1.0h-2.9ZM426.9 209.7h3.6v1.0h-3.6ZM416.8 227.7h1.4v1.7h-1.4ZM364.8 323.7h3.6v1.4h-3.6ZM398.0 327.6h2.9v1.0h-2.9ZM549.6 320.3h2.1v1.4h-2.1ZM533.0 279.1h1.0v1.0h-1.0ZM530.2 280.2h1.0v1.0h-1.0ZM530.2 256.7h1.0v1.0h-1.0ZM555.9 243.5h1.0v4.3h-1.0ZM704.4 275.2h2.1v1.7h-2.1ZM205.3 269.8h1.7v1.0h-1.7ZM237.6 275.2h1.1v1.0h-1.1ZM685.1 280.3h5.0v1.4h-5.0ZM689.0 271.3h1.4v2.9h-1.4ZM676.6 262.4h5.0v2.1h-5.0ZM679.8 264.2h2.9v1.4h-2.9ZM667.6 254.9h1.4v2.9h-1.4ZM666.2 263.7h1.4v1.0h-1.4ZM676.7 240.3h1.0v1.0h-1.0ZM694.7 239.9h1.4v1.4h-1.4ZM201.3 279.9h1.0v1.4h-1.0ZM196.8 176.2h4.3v1.0h-4.3ZM202.5 175.6h4.3v1.0h-4.3ZM209.7 174.2h4.3v1.0h-4.3ZM704.0 176.2h2.9v1.0h-2.9ZM219.0 171.4h2.9v1.0h-2.9ZM659.8 186.6h2.9v1.0h-2.9ZM665.1 184.5h2.1v1.0h-2.1ZM669.4 181.6h2.1v1.0h-2.1ZM633.1 212.3h1.4v1.0h-1.4ZM627.7 215.2h1.4v1.0h-1.4ZM358.6 204.0h1.0v1.0h-1.0ZM340.2 214.6h1.4v2.1h-1.4ZM342.4 216.4h1.4v1.4h-1.4ZM364.0 228.9h1.0v2.1h-1.0ZM363.2 235.1h1.1v1.0h-1.1ZM583.4 231.7h1.0v3.6h-1.0ZM584.4 238.5h1.0v1.4h-1.0ZM527.2 232.3h2.1v1.0h-2.1ZM440.9 161.7h1.1v1.0h-1.1ZM449.3 164.0h1.0v1.1h-1.0ZM446.6 165.9h1.1v1.0h-1.1ZM438.7 148.8h1.4v1.0h-1.4ZM477.9 143.8h1.4v1.0h-1.4ZM433.5 303.1h1.0v1.0h-1.0ZM442.9 272.8h1.0v1.0h-1.0ZM430.5 261.4h1.0v1.0h-1.0ZM294.9 288.8h1.0v1.0h-1.0ZM338.3 298.1h1.0v1.0h-1.0ZM198.8 312.9h1.7v1.0h-1.7ZM677.6 328.0h1.0v1.1h-1.0ZM687.8 322.5h1.0v1.0h-1.0ZM555.9 325.9h1.0v1.0h-1.0ZM524.3 316.2h1.4v1.0h-1.4ZM504.9 316.9h1.0v1.0h-1.0ZM455.9 327.8h1.0v1.0h-1.0ZM384.8 336.7h3.6v1.0h-3.6ZM364.8 339.0h5.0v1.0h-5.0ZM413.2 332.4h1.0v1.4h-1.0ZM647.7 301.2h1.4v1.0h-1.4ZM636.6 266.5h2.1v1.0h-2.1ZM642.7 258.1h1.4v2.1h-1.4ZM661.1 252.3h1.7v1.0h-1.7ZM643.7 252.3h2.1v1.0h-2.1ZM637.0 251.6h1.4v1.0h-1.4ZM631.3 255.1h1.4v1.0h-1.4ZM627.0 252.3h1.4v1.0h-1.4ZM622.9 259.9h1.0v1.4h-1.0ZM650.7 278.7h1.0v1.0h-1.0ZM328.3 227.4h1.0v1.0h-1.0ZM336.9 250.1h1.0v1.0h-1.0ZM283.7 204.5h1.0v1.0h-1.0ZM258.4 283.0h1.0v1.0h-1.0ZM251.2 263.0h1.1v1.0h-1.1ZM222.7 280.4h1.0v1.0h-1.0ZM207.8 270.5h1.0v1.0h-1.0ZM234.1 273.7h1.0v1.0h-1.0ZM244.1 271.5h1.1v1.0h-1.1ZM697.8 247.8h1.0v1.4h-1.0ZM226.4 247.3h1.0v1.0h-1.0ZM688.5 222.6h1.0v1.0h-1.0ZM658.9 228.2h1.0v1.4h-1.0ZM642.9 239.4h1.0v1.1h-1.0ZM339.0 297.2h1.0v1.0h-1.0ZM418.2 155.9h1.0v1.0h-1.0ZM209.2 277.2h1.0v1.0h-1.0ZM250.5 278.0h1.1v1.0h-1.1ZM265.4 285.9h1.0v1.0h-1.0ZM402.5 255.7h1.0v1.0h-1.0ZM409.2 248.8h1.0v1.0h-1.0ZM464.6 250.1h1.0v1.0h-1.0ZM460.4 249.7h1.0v1.0h-1.0ZM463.4 245.1h1.0v1.0h-1.0ZM466.7 263.0h1.0v1.0h-1.0ZM512.8 266.8h1.0v1.0h-1.0ZM415.8 226.2h1.4v1.0h-1.4ZM431.2 209.5h1.4v1.0h-1.4Z" fill="#000"/>
<path d="M275.6 180.7L315.7 180.7L315.7 180.1L316.5 181.1L318.8 181.3L322.0 181.8L323.7 182.1M333.9 186.0L333.8 189.3L332.9 190.7L335.9 190.4M338.8 188.8L342.6 187.6L344.9 186.4L349.5 186.4L350.6 185.7L351.6 184.0L352.8 183.0L354.8 183.4L354.8 185.4L355.9 186.6M250.3 151.3L250.3 164.6L253.1 164.6L255.3 166.3L258.2 165.3L261.2 167.3L263.6 169.9L266.0 170.9L265.2 172.6M284.4 204.3L287.9 204.0L293.1 206.0L297.1 206.0L297.1 205.3L299.6 205.3M320.0 229.9L320.0 228.8L320.7 227.8L322.5 227.8L321.1 226.1L321.7 225.2L324.2 225.2L325.5 224.2M324.2 225.2L324.2 227.9M323.0 231.1L324.1 230.1L325.2 230.7L326.2 231.5M324.1 230.1L324.8 228.9L325.7 228.2M327.0 232.1L328.8 230.8L330.2 229.9L332.7 229.4M329.2 234.8L330.9 234.9L332.1 235.1M333.2 238.9L333.4 237.1L333.7 236.9M340.4 240.4L341.4 238.5M348.5 233.6L348.4 234.6L347.4 237.5L348.1 240.1L351.6 240.6L355.2 241.8L354.8 244.2L355.5 247.8L356.1 248.9M356.1 248.9L358.8 249.2L360.2 245.6L361.6 245.2L364.5 244.5L364.9 243.2L364.0 242.2L365.9 238.5M364.9 243.2L365.9 243.8L366.2 247.1L367.3 248.8L370.2 248.1L371.0 247.9L373.0 247.1L374.5 247.5L377.3 247.3L377.9 244.6M370.2 248.1L369.9 245.9L369.5 243.5L370.2 242.1M371.0 247.9L371.6 245.6L374.2 245.6L374.5 242.5M356.1 248.9L354.8 248.1L351.9 248.2L352.3 252.1L351.6 256.6L347.5 258.2L346.1 261.3L347.4 264.0L348.5 264.9L350.9 266.3L352.3 266.3L353.5 268.5L352.5 272.5M338.9 248.6L341.6 250.2L344.1 250.8L343.8 252.9L341.6 254.9L339.5 257.1L338.8 257.8L336.9 255.5M344.1 250.8L346.6 252.5L348.8 254.1L351.6 256.6M352.3 266.3L353.8 266.3L357.3 264.6L358.3 266.0L360.9 268.5L363.8 269.9L365.5 272.2L368.3 273.9L368.8 279.0L369.0 282.2L371.9 282.5L373.0 284.9L374.0 287.2L374.9 289.0L372.0 290.6L369.3 293.7L371.6 294.7L375.0 298.3M352.5 272.5L353.1 275.7L351.1 276.7M353.1 275.7L354.1 281.3L355.9 283.2L362.2 282.3L363.8 279.7L368.8 279.0M362.2 282.3L365.2 284.9L368.0 287.0L373.0 284.9M355.9 283.2L353.8 285.6L353.8 289.2L352.2 291.3L351.6 294.9L351.6 298.4L350.9 302.0L350.2 305.6L349.5 309.9L349.4 313.4L349.1 317.0L348.1 319.8L346.6 322.0L348.8 324.1L352.3 325.3M369.3 293.7L368.5 297.0L368.2 299.0M438.8 190.7L442.7 191.3L441.7 193.6L441.1 195.7L440.9 197.5M448.9 188.7L452.5 189.6L456.1 190.1M455.1 177.7L457.5 179.4L459.8 180.0L460.6 180.4L463.2 180.7L462.3 182.7L460.1 184.4L461.2 185.3L461.5 187.6L462.2 188.1M459.8 180.0L460.2 179.0L460.1 177.9L461.2 176.6L461.5 174.1M456.4 177.3L458.3 177.1L459.9 177.7M462.3 182.7L465.2 182.8L466.5 183.7L468.9 183.4L471.0 184.3L471.0 185.6M463.8 172.3L465.6 172.4M471.8 173.7L472.3 175.6L472.6 177.9L469.3 178.9L471.2 181.0L470.0 182.8L466.5 182.8M472.6 177.9L475.0 178.7L478.5 180.0L483.7 180.6L485.7 178.6L485.0 176.4L485.3 173.7L484.0 173.0L479.5 173.0M471.2 181.0L472.9 180.7L475.6 181.3L478.5 180.0M475.6 181.3L475.9 182.1L475.0 184.3L472.9 185.7L471.0 185.7M475.9 182.1L480.0 182.3L483.2 181.6L483.7 180.6M475.0 184.3L478.3 185.1L481.5 184.7L483.6 182.4L483.2 181.6M481.5 184.7L483.6 187.1L485.7 188.3L490.0 187.7L492.3 188.3M483.6 182.4L486.5 182.3L489.4 181.8L491.7 184.1L491.7 185.7L493.7 186.0M472.9 185.7L475.0 186.1L478.6 186.4L479.2 187.8L477.9 190.0M479.2 187.8L480.7 189.6L483.6 190.3L484.2 191.7L480.9 192.0L480.0 194.0M484.2 191.7L488.7 191.6L491.4 190.7M483.7 190.3L484.3 188.3M485.3 173.7L489.4 171.3L491.7 170.4L491.2 168.9L490.6 167.9L491.4 165.7M481.6 169.6L485.7 170.9L489.4 171.3M486.3 167.4L488.3 168.0L490.6 168.4M485.0 176.4L487.9 176.6L491.4 177.0L496.9 176.3L496.6 174.7L494.9 171.3L491.7 170.4M485.7 178.6L489.4 181.8M496.9 176.3L500.4 177.4L502.1 178.9L506.1 179.4L508.6 181.4L508.3 182.3L506.0 183.4M491.4 165.7L492.6 164.3L495.0 162.6L493.6 160.7L494.3 158.6L493.6 155.7L494.3 154.0L492.9 152.2L495.7 151.2M480.7 152.2L485.0 152.5L487.2 152.7L488.6 151.0L492.2 150.9L492.9 152.2M467.5 166.6L469.0 163.7L468.9 162.2L470.3 159.2L472.2 157.2L474.3 154.3L477.9 152.9L480.7 152.2L480.9 152.0M480.9 152.0L482.2 153.6L485.6 156.4M448.4 200.4L448.9 202.1L449.4 205.0L446.4 206.4L444.4 207.8L439.1 209.5L439.1 211.7L444.7 215.0L442.2 215.1L444.4 227.1L443.7 228.5L435.1 228.8L434.1 229.8L433.8 232.8L435.8 233.2L436.5 234.9L439.7 234.9L440.1 236.4L440.8 238.6L439.4 239.9L440.7 244.4M439.1 211.7L433.0 211.4L432.8 211.2M439.1 211.1L434.4 213.5L434.4 217.1L433.0 217.8L433.0 220.2L427.2 220.7M444.7 215.0L453.2 221.1L456.1 223.5L457.6 223.2L460.1 222.8L463.6 220.8L468.6 217.1L471.5 218.5L474.2 217.2M463.8 198.0L463.2 201.1L462.2 203.5L464.5 204.8L465.1 207.5L465.8 214.5L468.5 217.1M467.6 203.3L466.1 204.3L465.1 207.5M465.6 214.4L468.5 217.1L471.5 218.5L472.8 218.0L474.3 217.2L485.7 222.8L485.7 222.1L487.2 222.1L487.2 219.2L487.2 205.5M487.2 219.2L496.4 219.2L504.1 219.2M485.7 222.8L485.5 228.4L484.3 228.2L482.9 232.1L483.3 234.9L485.0 236.4L484.3 238.2L486.5 239.2L487.9 240.6L490.7 243.5L495.4 245.6L497.2 245.5L500.0 244.4L501.9 242.8L500.0 238.5L500.1 236.4L502.1 232.8L503.6 230.2L504.3 226.4L506.3 224.9M485.0 236.4L482.2 237.1L478.3 237.8L473.6 239.9L472.2 241.8L472.2 243.9L474.3 247.5L475.0 246.1L477.9 244.6L480.7 244.4L483.6 244.2L486.5 243.5L490.6 243.5M474.2 217.2L474.3 221.4L473.6 226.4L471.3 228.4L470.8 230.1L472.2 232.1L472.9 233.5L472.9 236.5L471.3 237.8L468.6 240.6L467.2 241.4L465.8 242.8L464.2 243.8M472.2 232.1L468.6 231.5L464.3 232.4L461.5 231.4L457.3 231.4L456.6 233.9L455.4 236.4L455.4 241.6M457.3 231.4L456.2 228.5L457.6 226.7L457.6 223.2M456.6 233.9L452.9 231.7L451.9 229.4L450.1 229.2L445.1 228.8L443.7 228.5M455.4 236.4L453.6 234.9L451.5 234.9L447.4 234.9L447.2 236.6L447.9 238.9L446.9 241.6L447.4 243.5M451.5 234.9L452.2 235.6L451.9 238.9L452.4 240.8L453.2 241.9M453.8 234.4L453.8 237.1L454.1 241.8M443.7 235.8L447.4 234.9M440.1 236.4L438.7 236.8L436.5 238.8L435.1 240.8M437.2 238.1L435.1 238.5L433.7 239.2L433.0 237.8L432.0 237.1M434.1 229.8L432.0 232.1L427.5 231.8M432.0 232.8L429.4 233.2L427.7 232.9M465.8 247.5L467.6 247.5L467.6 249.2L464.8 249.2M467.6 247.5L470.5 247.5L472.2 247.3L474.3 247.5L477.2 245.6L476.5 252.1L475.0 253.5L472.2 257.1L470.0 257.5L468.6 257.8M470.5 247.5L470.0 248.9L471.5 251.2L472.2 253.8L469.3 254.2L467.9 255.6L467.2 256.3M468.9 259.2L470.8 259.2L475.0 258.9L476.5 262.0L481.5 260.6L483.6 266.3L485.7 266.8L485.7 269.2L482.9 269.2L482.9 273.5L485.0 275.6L481.2 276.3L470.0 274.9L468.2 275.3M477.2 245.6L478.6 244.5L482.2 244.6L485.7 244.2L490.7 243.5L495.4 245.6L494.3 249.2L493.6 252.1L493.2 254.9L493.6 259.2L495.0 262.8L492.2 262.8L492.2 266.3L494.0 268.0L490.0 267.8L485.7 266.3M500.0 244.4L502.1 243.8L503.6 244.2L505.7 245.5L507.9 245.6L510.0 245.1L511.4 244.2L512.8 243.5L515.7 243.5L520.0 239.2L514.3 237.8L513.3 237.1L512.6 234.9M510.0 245.1L510.0 252.8M495.4 245.6L495.0 248.5L493.7 252.3L495.0 252.1L499.9 252.1L502.1 253.5L505.0 255.6L507.4 257.3M500.0 244.4L500.0 248.5L499.9 252.1M495.0 252.1L495.4 253.9L495.0 255.5L493.2 254.9M494.0 268.0L498.6 267.8L498.2 264.2L499.7 264.2M500.9 267.0L505.0 267.0L509.3 265.6M494.7 272.7L498.6 272.7L498.6 274.9L498.0 280.6L496.4 282.5L497.2 288.9M482.9 273.5L485.0 276.2L487.9 276.2L491.4 274.2L494.7 272.7M487.9 276.2L490.0 279.9L492.9 282.0L496.4 282.5M481.2 276.3L481.5 282.0L480.0 282.0L480.0 286.0L480.0 291.2L475.0 291.4M480.0 286.0L482.9 287.0L487.9 287.0L490.0 284.9L492.9 282.0M498.6 267.8L497.6 270.6L494.7 272.7M498.2 264.2L495.3 262.3M488.7 191.6L491.4 190.8M503.1 198.3L505.7 198.1L510.0 197.7L512.0 197.5L515.4 197.5L515.0 194.3L513.6 192.0L510.7 191.4M515.0 194.3L517.8 195.1L520.0 195.8L521.3 195.8M502.7 200.1L503.6 199.0L505.7 198.1M502.1 201.3L503.6 201.8L503.6 202.8L502.3 203.1L501.4 203.5M503.6 202.8L506.9 203.0L510.0 201.5L510.3 198.5L512.0 197.5M506.9 203.0L507.4 204.7L504.3 205.7L505.0 207.8L502.9 209.0L501.3 208.5M507.4 204.7L511.4 206.4L515.3 209.0L517.8 209.1L519.3 209.2L520.0 209.2M515.4 197.5L516.4 199.4L517.1 200.7L517.4 203.5L519.4 205.0L520.0 207.1M504.0 219.2L505.0 216.0M517.8 209.1L519.3 210.0L520.6 209.8M525.1 216.1L526.4 218.5L530.7 219.2L531.0 222.1L527.1 226.4L526.0 228.4M530.7 219.2L532.0 215.1M512.6 227.2L515.0 225.8L518.6 226.2L520.4 224.7L521.5 224.1L525.7 223.5L527.1 226.4M528.5 198.1L531.4 197.1L533.5 196.1L537.8 198.4L538.8 199.8L538.5 201.8L537.8 203.5L538.4 205.7L539.5 205.8L539.4 207.8L538.4 208.1L539.1 208.8L541.4 212.7L539.4 214.7M538.8 199.8L540.7 200.3L543.5 198.8L544.9 197.1L548.2 197.5L551.4 197.1L553.5 196.5L555.1 197.8L558.4 197.3M538.4 208.1L542.8 208.5L546.4 208.0L548.2 205.5L550.4 205.1L552.1 202.5L550.7 201.7L552.9 201.5L553.5 199.8L554.2 198.5L558.4 197.3M558.4 197.3L558.8 199.3L561.4 200.0L562.8 201.7L564.1 203.7L563.5 205.0L564.9 206.5L567.1 207.5L570.6 208.8L573.5 210.2L577.0 210.8L578.2 210.7L579.6 210.4L582.2 211.0L585.6 211.4L588.5 210.0L590.3 210.2M558.4 197.3L557.1 201.4L556.4 204.3L557.9 206.4L557.1 207.5L556.1 209.2L552.8 210.8L551.4 212.7L552.8 216.0L550.7 216.1L548.8 216.8M577.0 210.8L577.2 212.8L578.5 213.5L577.3 215.7L578.0 217.1L578.5 219.2M578.5 213.5L582.8 215.0L583.0 216.4L582.0 217.8L583.3 219.2L583.2 221.1M590.3 210.2L590.6 212.1L588.5 214.2L586.3 216.4L584.9 218.5L583.2 220.7M590.3 210.2L592.0 213.5L591.3 216.4L593.5 219.1L595.9 220.1L597.0 218.5L598.4 218.2L601.3 217.8L603.7 218.1L605.6 219.8M593.5 219.1L594.9 221.8L591.3 224.2L590.6 226.4L592.6 230.7L593.0 235.9M594.9 221.8L597.0 223.1L596.0 225.5L598.4 224.4L601.2 226.9L602.0 230.2L598.4 230.4L597.7 232.8M598.4 218.2L599.9 220.7L600.6 223.1L602.7 225.7L604.9 228.1L605.0 229.9L602.7 230.8L602.0 230.2M605.0 229.9L603.4 233.8L601.3 235.2L600.3 235.6M594.7 241.4L596.3 242.4L597.2 241.8M517.8 192.1L520.7 191.0M510.7 191.4L513.6 189.6L516.7 190.0L518.6 191.7L520.0 191.1L520.8 191.0M517.8 192.1L515.7 191.7L513.6 192.0M506.0 183.4L508.9 182.8L510.7 182.1M519.3 189.3L520.8 191.0M518.6 181.4L519.3 178.6L521.4 177.6L523.5 177.1L528.5 177.1L531.4 178.1L535.0 178.1L538.5 177.9L539.2 176.4L537.8 175.7L538.5 174.3L540.0 173.6L544.2 172.7L548.5 171.9L552.1 172.0L553.5 173.3L556.4 174.3L560.6 173.3L562.8 175.7L565.6 178.1L569.9 177.9L572.8 179.6L575.6 180.6M575.6 180.6L579.9 178.6L583.5 178.3L587.0 179.3L591.3 176.4L597.0 177.1L602.7 178.9L606.3 180.3L611.3 180.0L614.9 179.0L618.0 179.6L622.7 175.7L626.3 174.6L631.3 175.3L633.4 179.3L637.7 181.4L642.0 181.8L644.1 181.7L642.0 186.4L638.8 186.6L638.4 189.3L637.8 190.1M637.8 190.1L636.4 191.4L634.1 191.4L632.0 191.4L628.8 193.7M631.7 196.7L633.4 196.4L634.8 195.8M575.6 180.6L573.5 183.6L569.9 183.3L569.2 185.7L566.3 186.4L565.9 190.4L562.1 192.1L559.9 192.8L557.1 194.3L556.4 195.7L558.4 197.3M575.6 180.6L577.8 181.7L580.6 183.6L581.0 186.0L584.9 186.6L589.2 189.6L594.2 189.8L601.3 191.3L604.9 190.1L609.1 190.0L611.3 188.4L610.6 186.4L614.9 185.8L618.0 184.0L622.4 184.0L619.8 182.1L618.0 179.6M531.1 186.4L531.4 191.7L532.8 191.7L535.0 190.0L537.1 190.7L539.2 191.8L540.7 194.3L543.5 195.7L546.4 197.3M527.0 190.7L530.0 191.4L531.1 191.7L532.8 191.7M527.1 194.3L531.4 196.1L533.5 196.1M535.0 190.0L538.5 188.6L543.5 188.4L545.4 189.4L547.1 191.8L549.9 191.6L552.7 190.3L556.4 190.0L557.8 189.3L561.4 189.3L565.9 190.4M547.1 191.8L549.2 192.8L552.1 192.1L553.5 193.3L555.9 193.6L556.4 194.3L554.2 194.4L552.1 194.1L549.2 194.3L548.8 196.1L548.2 197.5M552.1 192.1L553.5 191.6L555.6 192.3" fill="none" stroke="#000" stroke-width="1" stroke-linejoin="round"/>
</svg>
</div>
</body></html>
